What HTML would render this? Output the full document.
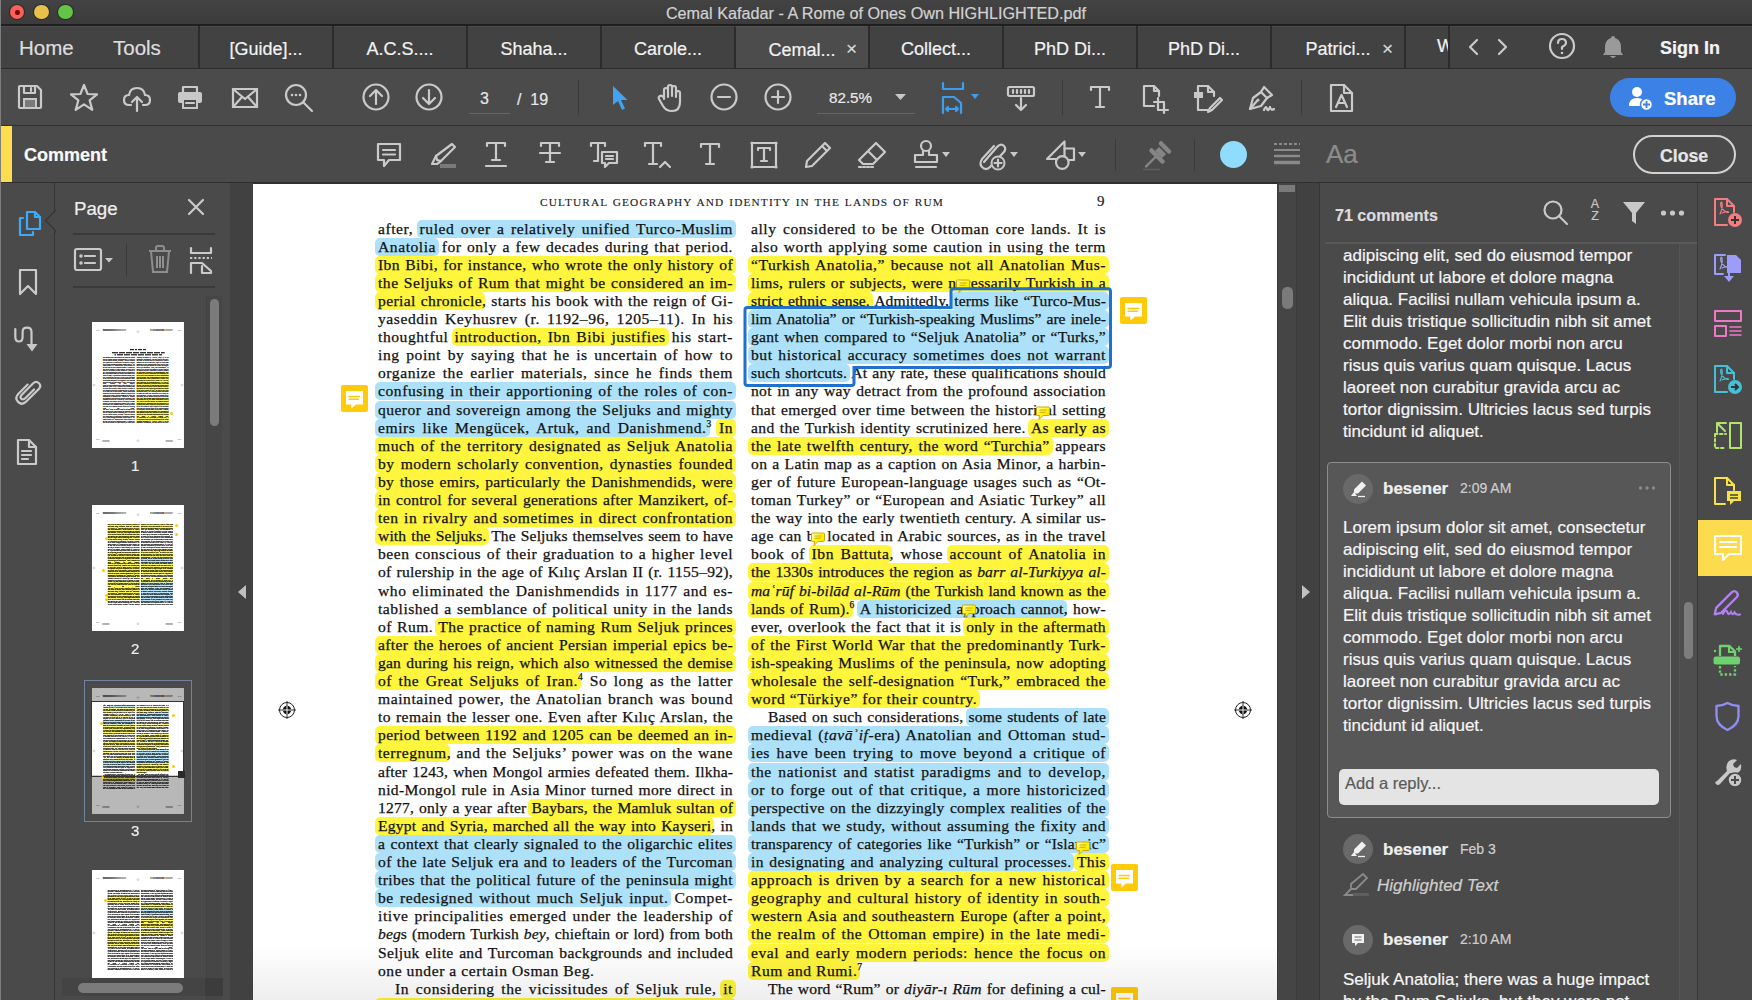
<!DOCTYPE html>
<html><head><meta charset="utf-8"><title>Acrobat</title>
<style>
*{box-sizing:border-box}
html,body{margin:0;padding:0}
body{width:1752px;height:1000px;overflow:hidden;position:relative;background:#3f3f3f;font-family:"Liberation Sans",sans-serif;color:#e8e8e8}
.a{position:absolute;-webkit-text-stroke:0.2px}
svg{position:absolute;overflow:visible}
#title{left:0;top:0;width:1752px;height:24px;background:linear-gradient(#434343,#3b3b3b)}
#title .t{left:0;width:1752px;top:4px;text-align:center;font-size:16.2px;color:#d2d2d2}
.dot{width:14.8px;height:14.8px;border-radius:50%;top:4.6px}
#tabs{left:0;top:26px;width:1752px;height:42px;background:#424242;border-top:1px solid #4d4d4d}
.tab{top:-1px;height:42px;width:134px;border-left:2px solid #2c2c2c;text-align:center;font-size:18px;line-height:46px;color:#f2f2f2}
.tab.act{background:#4c4c4c;border-top:1px solid #555}
#tool{left:0;top:69px;width:1752px;height:56px;background:#4b4b4b}
#cbar{left:0;top:126px;width:1752px;height:56px;background:#4a4a4a}
.sep{background:#2e2e2e}
.ic{stroke:#c9c9c9;fill:none;stroke-width:2}
.ln{position:absolute;height:18.1px;line-height:18.1px;white-space:nowrap;text-align:justify;text-align-last:justify;font-family:"Liberation Serif",serif;font-size:15.6px;color:#111;-webkit-text-stroke:0.25px #111}
.ln.last{text-align-last:left}
.ln y{background:#fff53d;border-radius:5px;padding:0 3px 1px;margin:0 -3px}
.ln c{background:#ace1f9;border-radius:5px;padding:0 3px 1px;margin:0 -3px}
.ln sup{font-size:9.5px;vertical-align:6px;line-height:0}
.ln i{font-style:italic}
.thumbpg .ln{-webkit-text-stroke:1.6px #111;color:#111}
.thumbpg .ln y,.thumbpg .ln c{border-radius:0}
.cm{font-size:17px;line-height:22px;color:#f6f6f6}
</style></head><body>
<div class="a" id="title"><div class="a t">Cemal Kafadar - A Rome of Ones Own HIGHLIGHTED.pdf</div></div>
<div class="a" style="left:0;top:24px;width:1752px;height:2px;background:#1f1f1f"></div>
<div class="a dot" style="left:9.6px;background:#fd605a;box-shadow:0 0 0 1px #2a2a2a"></div>
<div class="a dot" style="left:34.2px;background:#e8c14a;box-shadow:0 0 0 1px #2a2a2a"></div>
<div class="a dot" style="left:58.4px;background:#62c545;box-shadow:0 0 0 1px #2a2a2a"></div>
<div class="a" style="left:15px;top:10px;width:4.5px;height:4.5px;border-radius:50%;background:#7a0a06"></div>
<div class="a" id="tabs">
<div class="a" style="left:0;top:-1px;width:198px;height:42px;background:#434343;border-top:1px solid #4d4d4d"></div>
<div class="a" style="left:19px;top:9px;font-size:20.5px;color:#dedede">Home</div>
<div class="a" style="left:113px;top:9px;font-size:20.5px;color:#dedede">Tools</div>
<div class="a tab" style="left:198px;">[Guide]...</div>
<div class="a tab" style="left:332px;">A.C.S....</div>
<div class="a tab" style="left:466px;">Shaha...</div>
<div class="a tab" style="left:600px;">Carole...</div>
<div class="a tab act" style="left:734px;">Cemal...</div>
<div class="a" style="left:846px;top:11px;font-size:19px;color:#d8d8d8">×</div>
<div class="a tab" style="left:868px;">Collect...</div>
<div class="a tab" style="left:1002px;">PhD Di...</div>
<div class="a tab" style="left:1136px;">PhD Di...</div>
<div class="a tab" style="left:1270px;">Patrici...</div>
<div class="a" style="left:1382px;top:11px;font-size:19px;color:#d8d8d8">×</div>
<div class="a" style="left:1404px;top:-1px;width:44px;height:42px;border-left:2px solid #2c2c2c;overflow:hidden"><div class="a" style="left:31px;top:10px;font-size:18px;color:#f2f2f2">W</div></div>
<div class="a" style="left:1448px;top:-1px;width:2px;height:42px;background:#2c2c2c"></div>
</div>
<div class="a" style="left:0;top:67.5px;width:1752px;height:1.5px;background:#2a2a2a"></div>
<svg style="left:1466px;top:38px" width="16" height="18" viewBox="0 0 16 18"><path d="M11 2 L4 9 L11 16" stroke="#cacaca" fill="none" stroke-width="2.2" stroke-linecap="round" stroke-linejoin="round"/></svg>
<svg style="left:1494px;top:38px" width="16" height="18" viewBox="0 0 16 18"><path d="M5 2 L12 9 L5 16" stroke="#cacaca" fill="none" stroke-width="2.2" stroke-linecap="round" stroke-linejoin="round"/></svg>
<svg style="left:1548px;top:32px" width="28" height="28" viewBox="0 0 28 28"><circle cx="14" cy="14" r="12" stroke="#cacaca" fill="none" stroke-width="2.2" stroke-linecap="round" stroke-linejoin="round"/><path d="M10 11 Q10 7 14 7 Q18 7 18 11 Q18 13 14 15 L14 17" stroke="#cacaca" fill="none" stroke-width="2.2" stroke-linecap="round" stroke-linejoin="round"/><circle cx="14" cy="21" r="1.3" fill="#c8c8c8"/></svg>
<svg style="left:1600px;top:34px" width="26" height="26" viewBox="0 0 26 26"><path d="M13 2 a2 2 0 0 1 2 2 Q21 6 21 13 L21 18 L23 21 L3 21 L5 18 L5 13 Q5 6 11 4 a2 2 0 0 1 2 -2Z" fill="#9a9a9a"/><path d="M10 22 Q13 26 16 22Z" fill="#9a9a9a"/></svg>
<div class="a" style="left:1660px;top:38px;font-size:18px;font-weight:bold;color:#f4f4f4">Sign In</div>
<div class="a" id="tool"></div>
<div class="a" style="left:0;top:125px;width:1752px;height:1.5px;background:#2f2f2f"></div>
<svg style="left:17px;top:84px" width="26" height="26" viewBox="0 0 26 26"><path d="M2 3 Q2 2 3 2 L20 2 L24 6 L24 23 Q24 24 23 24 L3 24 Q2 24 2 23Z" stroke="#cacaca" fill="none" stroke-width="2.2" stroke-linecap="round" stroke-linejoin="round"/><path d="M7 2 L7 9 L18 9 L18 2" stroke="#cacaca" fill="none" stroke-width="2.2" stroke-linecap="round" stroke-linejoin="round"/><rect x="7" y="15" width="12" height="9" fill="#7a7a7a" stroke="#c8c8c8" stroke-width="2"/><path d="M14 4 L14 7" stroke="#cacaca" fill="none" stroke-width="2.2" stroke-linecap="round" stroke-linejoin="round"/></svg>
<svg style="left:69px;top:83px" width="30" height="29" viewBox="0 0 30 29"><path d="M15 2 L18.6 11 L28 11.3 L20.6 17.3 L23.3 26.8 L15 21.3 L6.7 26.8 L9.4 17.3 L2 11.3 L11.4 11Z" stroke="#cacaca" fill="none" stroke-width="2.2" stroke-linecap="round" stroke-linejoin="round"/></svg>
<svg style="left:122px;top:83px" width="30" height="30" viewBox="0 0 30 30"><path d="M9 22 L7 22 Q2 22 2 17 Q2 12 7 12 Q8 5 15 5 Q22 5 23 12 Q28 12 28 17 Q28 22 23 22 L21 22" stroke="#cacaca" fill="none" stroke-width="2.2" stroke-linecap="round" stroke-linejoin="round"/><path d="M15 28 L15 14 M10 19 L15 14 L20 19" stroke="#cacaca" fill="none" stroke-width="2.2" stroke-linecap="round" stroke-linejoin="round"/></svg>
<svg style="left:176px;top:84px" width="28" height="26" viewBox="0 0 28 26"><path d="M7 8 L7 3 L21 3 L21 8" stroke="#cacaca" fill="none" stroke-width="2.2" stroke-linecap="round" stroke-linejoin="round"/><rect x="2" y="8" width="24" height="11" rx="2" fill="#c8c8c8"/><rect x="7" y="15" width="14" height="9" fill="#4b4b4b" stroke="#c8c8c8" stroke-width="2"/><path d="M10 19 L18 19" stroke="#cacaca" fill="none" stroke-width="2.2" stroke-linecap="round" stroke-linejoin="round"/></svg>
<svg style="left:231px;top:87px" width="28" height="22" viewBox="0 0 28 22"><rect x="2" y="2" width="24" height="18" stroke="#cacaca" fill="none" stroke-width="2.2" stroke-linecap="round" stroke-linejoin="round"/><path d="M2 2 L14 12 L26 2 M2 20 L11 10 M26 20 L17 10" stroke="#cacaca" fill="none" stroke-width="2.2" stroke-linecap="round" stroke-linejoin="round"/></svg>
<svg style="left:284px;top:83px" width="30" height="30" viewBox="0 0 30 30"><circle cx="12" cy="12" r="10" stroke="#cacaca" fill="none" stroke-width="2.2" stroke-linecap="round" stroke-linejoin="round"/><path d="M19.5 19.5 L28 28" stroke="#cacaca" fill="none" stroke-width="2.2" stroke-linecap="round" stroke-linejoin="round" stroke-width="2.5"/><circle cx="8" cy="12" r="1.3" fill="#c8c8c8"/><circle cx="12" cy="12" r="1.3" fill="#c8c8c8"/><circle cx="16" cy="12" r="1.3" fill="#c8c8c8"/></svg>
<svg style="left:362px;top:83px" width="28" height="28" viewBox="0 0 28 28"><circle cx="14" cy="14" r="12.5" stroke="#cacaca" fill="none" stroke-width="2.2" stroke-linecap="round" stroke-linejoin="round"/><path d="M14 21 L14 7 M8 13 L14 7 L20 13" stroke="#cacaca" fill="none" stroke-width="2.2" stroke-linecap="round" stroke-linejoin="round"/></svg>
<svg style="left:415px;top:83px" width="28" height="28" viewBox="0 0 28 28"><circle cx="14" cy="14" r="12.5" stroke="#cacaca" fill="none" stroke-width="2.2" stroke-linecap="round" stroke-linejoin="round"/><path d="M14 7 L14 21 M8 15 L14 21 L20 15" stroke="#cacaca" fill="none" stroke-width="2.2" stroke-linecap="round" stroke-linejoin="round"/></svg>
<div class="a" style="left:480px;top:90px;font-size:16px;color:#e8e8e8">3</div>
<div class="a" style="left:469px;top:113px;width:41px;height:1px;background:#666"></div>
<div class="a" style="left:517px;top:91px;font-size:16px;color:#e8e8e8">/&nbsp; 19</div>
<div class="a sep" style="left:578px;top:80px;width:1px;height:35px;background:#3a3a3a"></div>
<svg style="left:610px;top:84px" width="20" height="28" viewBox="0 0 20 28"><path d="M3 2 L3 21 L8 17 L12 26 L15 24.5 L11 16 L17.5 16Z" fill="#44a2f2"/></svg>
<svg style="left:656px;top:83px" width="30" height="30" viewBox="0 0 30 30"><path d="M8 16 L8 7 Q8 5 10 5 Q12 5 12 7 L12 14 M12 12 L12 4 Q12 2 14 2 Q16 2 16 4 L16 13 M16 12 L16 5 Q16 3 18 3 Q20 3 20 5 L20 14 M20 11 Q20 8 22 8 Q24 8 24 10 L24 19 Q24 28 16 28 Q10 28 7 23 L3 16 Q2 14 4 13 Q6 12 8 15" stroke="#cacaca" fill="none" stroke-width="2.2" stroke-linecap="round" stroke-linejoin="round"/></svg>
<svg style="left:710px;top:83px" width="28" height="28" viewBox="0 0 28 28"><circle cx="14" cy="14" r="12.5" stroke="#cacaca" fill="none" stroke-width="2.2" stroke-linecap="round" stroke-linejoin="round"/><path d="M8 14 L20 14" stroke="#cacaca" fill="none" stroke-width="2.2" stroke-linecap="round" stroke-linejoin="round"/></svg>
<svg style="left:764px;top:83px" width="28" height="28" viewBox="0 0 28 28"><circle cx="14" cy="14" r="12.5" stroke="#cacaca" fill="none" stroke-width="2.2" stroke-linecap="round" stroke-linejoin="round"/><path d="M8 14 L20 14 M14 8 L14 20" stroke="#cacaca" fill="none" stroke-width="2.2" stroke-linecap="round" stroke-linejoin="round"/></svg>
<div class="a" style="left:829px;top:89px;font-size:15.2px;color:#e8e8e8">82.5%</div>
<div class="a" style="left:817px;top:113px;width:98px;height:1px;background:#666"></div>
<svg style="left:895px;top:94px" width="11" height="7" viewBox="0 0 11 7"><path d="M0 0 L11 0 L5.5 6Z" fill="#c8c8c8"/></svg>
<svg style="left:940px;top:81px" width="40" height="34" viewBox="0 0 40 34"><path d="M3 2 L3 8 L23 8 L23 2" stroke="#3d9ef0" fill="none" stroke-width="2.2" stroke-linecap="round" stroke-linejoin="round"/><path d="M3 32 L3 16 L14 16 L21 22 L21 32" stroke="#3d9ef0" fill="none" stroke-width="2.2" stroke-linecap="round" stroke-linejoin="round"/><path d="M6 28 L18 28 M8 26 L6 28 L8 30 M16 26 L18 28 L16 30" stroke="#3d9ef0" fill="none" stroke-width="2.2" stroke-linecap="round" stroke-linejoin="round" stroke-width="1.6"/><path d="M31 13 L39 13 L35 18Z" fill="#3d9ef0"/></svg>
<svg style="left:1006px;top:84px" width="30" height="28" viewBox="0 0 30 28"><rect x="2" y="3" width="26" height="9" rx="1.5" stroke="#cacaca" fill="none" stroke-width="2.2" stroke-linecap="round" stroke-linejoin="round"/><path d="M7 6 L7 9 M11 6 L11 9 M15 6 L15 9 M19 6 L19 9 M23 6 L23 9" stroke="#cacaca" fill="none" stroke-width="2.2" stroke-linecap="round" stroke-linejoin="round" stroke-width="1.5"/><path d="M15 14 L15 26 M10 21 L15 26 L20 21" stroke="#cacaca" fill="none" stroke-width="2.2" stroke-linecap="round" stroke-linejoin="round"/></svg>
<div class="a" style="left:1062px;top:80px;width:1px;height:35px;background:#3a3a3a"></div>
<svg style="left:1089px;top:85px" width="22" height="24" viewBox="0 0 22 24"><path d="M2 5 L2 2 L20 2 L20 5 M11 2 L11 22 M7 22 L15 22" stroke="#cacaca" fill="none" stroke-width="2.2" stroke-linecap="round" stroke-linejoin="round"/></svg>
<svg style="left:1140px;top:84px" width="30" height="30" viewBox="0 0 30 30"><path d="M14 22 L4 22 L4 2 L14 2 L19 7 L19 12" stroke="#cacaca" fill="none" stroke-width="2.2" stroke-linecap="round" stroke-linejoin="round"/><path d="M14 2 L14 7 L19 7" stroke="#cacaca" fill="none" stroke-width="2.2" stroke-linecap="round" stroke-linejoin="round"/><path d="M18 14 L18 26 L28 26 M14 18 L24 18 L24 29" stroke="#cacaca" fill="none" stroke-width="2.2" stroke-linecap="round" stroke-linejoin="round"/></svg>
<svg style="left:1193px;top:84px" width="30" height="30" viewBox="0 0 30 30"><path d="M5 14 L5 26 L16 26 M5 8 L5 2 L15 2 L21 8 L21 12" stroke="#cacaca" fill="none" stroke-width="2.2" stroke-linecap="round" stroke-linejoin="round"/><rect x="1" y="8" width="9" height="6" fill="#c8c8c8"/><path d="M15 2 L15 8 L21 8" stroke="#cacaca" fill="none" stroke-width="2.2" stroke-linecap="round" stroke-linejoin="round"/><path d="M27 14 L17 24 L15 28 L19 26 L29 16Z" stroke="#cacaca" fill="none" stroke-width="2.2" stroke-linecap="round" stroke-linejoin="round"/></svg>
<svg style="left:1247px;top:83px" width="30" height="30" viewBox="0 0 30 30"><path d="M3 26 L6 15 L14 9 L20 15 L14 23Z" stroke="#cacaca" fill="none" stroke-width="2.2" stroke-linecap="round" stroke-linejoin="round"/><path d="M14 9 L17 4 L25 12 L20 15" stroke="#cacaca" fill="none" stroke-width="2.2" stroke-linecap="round" stroke-linejoin="round"/><path d="M3 26 L10 18" stroke="#cacaca" fill="none" stroke-width="2.2" stroke-linecap="round" stroke-linejoin="round"/><circle cx="11" cy="17" r="1.5" fill="#c8c8c8"/><path d="M17 27 Q19 22 20 26 Q21 29 23 24 Q24 28 27 26" stroke="#cacaca" fill="none" stroke-width="2.2" stroke-linecap="round" stroke-linejoin="round" stroke-width="1.6"/></svg>
<div class="a" style="left:1301px;top:80px;width:1px;height:35px;background:#3a3a3a"></div>
<svg style="left:1329px;top:83px" width="26" height="30" viewBox="0 0 26 30"><path d="M2 2 L15 2 L23 10 L23 28 L2 28Z" stroke="#cacaca" fill="none" stroke-width="2.2" stroke-linecap="round" stroke-linejoin="round"/><path d="M15 2 L15 10 L23 10" stroke="#cacaca" fill="none" stroke-width="2.2" stroke-linecap="round" stroke-linejoin="round"/><path d="M7 24 L12.5 12 L18 24 M9 20 L16 20" stroke="#cacaca" fill="none" stroke-width="2.2" stroke-linecap="round" stroke-linejoin="round" stroke-width="1.8"/></svg>
<div class="a" style="left:1610px;top:78px;width:126px;height:39px;border-radius:20px;background:#3c82e6"></div>
<svg style="left:1628px;top:86px" width="26" height="26" viewBox="0 0 26 26"><circle cx="9" cy="6" r="5" fill="#fff"/><path d="M1 20 Q1 12 9 12 Q14 12 16 15 L16 20Z" fill="#fff"/><circle cx="18.5" cy="18.5" r="6" fill="#fff" stroke="#3c82e6" stroke-width="1.5"/><path d="M18.5 15 L18.5 22 M15 18.5 L22 18.5" stroke="#3c82e6" stroke-width="1.8"/></svg>
<div class="a" style="left:1664px;top:88px;font-size:18.5px;font-weight:bold;color:#fff">Share</div>
<div class="a" id="cbar"></div>
<div class="a" style="left:0;top:126px;width:12px;height:56px;background:#fddc4e"></div>
<div class="a" style="left:24px;top:145px;font-size:18px;font-weight:bold;color:#fafafa">Comment</div>
<div class="a" style="left:0;top:182px;width:1752px;height:2px;background:#2f2f2f"></div>
<svg style="left:375px;top:141px" width="28" height="28" viewBox="0 0 28 28"><path d="M3 3 L25 3 L25 19 L14 19 L9 25 L9 19 L3 19Z" stroke="#cacaca" fill="none" stroke-width="2.2" stroke-linecap="round" stroke-linejoin="round"/><path d="M8 9 L20 9 M8 13.5 L20 13.5" stroke="#cacaca" fill="none" stroke-width="2.2" stroke-linecap="round" stroke-linejoin="round"/></svg>
<svg style="left:427px;top:140px" width="30" height="30" viewBox="0 0 30 30"><path d="M25 4 L28 7 L14 21 L10 20 L9 16Z" stroke="#cacaca" fill="none" stroke-width="2.2" stroke-linecap="round" stroke-linejoin="round"/><path d="M9 16 L5 24 L10 24 L14 21" stroke="#cacaca" fill="none" stroke-width="2.2" stroke-linecap="round" stroke-linejoin="round"/><rect x="13" y="24" width="16" height="4" fill="#7a7a7a"/></svg>
<svg style="left:484px;top:141px" width="24" height="28" viewBox="0 0 24 28"><path d="M3 5 L3 2 L21 2 L21 5 M12 2 L12 19 M8 19 L16 19 M2 25 L22 25" stroke="#cacaca" fill="none" stroke-width="2.2" stroke-linecap="round" stroke-linejoin="round"/></svg>
<svg style="left:538px;top:141px" width="24" height="28" viewBox="0 0 24 28"><path d="M3 5 L3 2 L21 2 L21 5 M12 2 L12 21 M8 21 L16 21 M2 12 L22 12" stroke="#cacaca" fill="none" stroke-width="2.2" stroke-linecap="round" stroke-linejoin="round"/></svg>
<svg style="left:588px;top:141px" width="32" height="28" viewBox="0 0 32 28"><path d="M3 5 L3 2 L17 2 L17 5 M10 2 L10 20 M6 20 L10 20" stroke="#cacaca" fill="none" stroke-width="2.2" stroke-linecap="round" stroke-linejoin="round"/><path d="M14 11 L29 11 L29 22 L21 22 L17 26 L17 22 L14 22Z" stroke="#cacaca" fill="none" stroke-width="2.2" stroke-linecap="round" stroke-linejoin="round"/><path d="M18 15 L25 15 M18 18 L25 18" stroke="#cacaca" fill="none" stroke-width="2.2" stroke-linecap="round" stroke-linejoin="round" stroke-width="1.5"/></svg>
<svg style="left:642px;top:141px" width="32" height="30" viewBox="0 0 32 30"><path d="M3 5 L3 2 L19 2 L19 5 M11 2 L11 23 M7 23 L15 23" stroke="#cacaca" fill="none" stroke-width="2.2" stroke-linecap="round" stroke-linejoin="round"/><path d="M18 26 L23 21 L28 26" stroke="#cacaca" fill="none" stroke-width="2.2" stroke-linecap="round" stroke-linejoin="round"/></svg>
<svg style="left:699px;top:142px" width="22" height="24" viewBox="0 0 22 24"><path d="M2 5 L2 2 L20 2 L20 5 M11 2 L11 22 M7 22 L15 22" stroke="#cacaca" fill="none" stroke-width="2.2" stroke-linecap="round" stroke-linejoin="round"/></svg>
<svg style="left:749px;top:140px" width="30" height="30" viewBox="0 0 30 30"><rect x="3" y="3" width="24" height="24" stroke="#cacaca" fill="none" stroke-width="2.2" stroke-linecap="round" stroke-linejoin="round"/><circle cx="3" cy="3" r="1.6" fill="#c8c8c8"/><circle cx="27" cy="3" r="1.6" fill="#c8c8c8"/><circle cx="3" cy="27" r="1.6" fill="#c8c8c8"/><circle cx="27" cy="27" r="1.6" fill="#c8c8c8"/><path d="M9 10 L9 8 L21 8 L21 10 M15 8 L15 21 M12 21 L18 21" stroke="#cacaca" fill="none" stroke-width="2.2" stroke-linecap="round" stroke-linejoin="round" stroke-width="1.7"/></svg>
<svg style="left:803px;top:140px" width="30" height="30" viewBox="0 0 30 30"><path d="M22 3 L27 8 L9 26 L3 27 L4 21Z M19 6 L24 11" stroke="#cacaca" fill="none" stroke-width="2.2" stroke-linecap="round" stroke-linejoin="round"/></svg>
<svg style="left:856px;top:140px" width="32" height="30" viewBox="0 0 32 30"><path d="M20 3 L29 12 L17 24 L7 24 L3 20Z M12 11 L21 20" stroke="#cacaca" fill="none" stroke-width="2.2" stroke-linecap="round" stroke-linejoin="round"/><path d="M3 27 L18 27" stroke="#cacaca" fill="none" stroke-width="2.2" stroke-linecap="round" stroke-linejoin="round" stroke-dasharray="2 2"/></svg>
<svg style="left:911px;top:138px" width="40" height="34" viewBox="0 0 40 34"><circle cx="15" cy="8" r="5" stroke="#cacaca" fill="none" stroke-width="2.2" stroke-linecap="round" stroke-linejoin="round"/><path d="M12 13 L12 17 L4 17 L4 24 L26 24 L26 17 L18 17 L18 13" stroke="#cacaca" fill="none" stroke-width="2.2" stroke-linecap="round" stroke-linejoin="round"/><path d="M5 29 L25 29" stroke="#cacaca" fill="none" stroke-width="2.2" stroke-linecap="round" stroke-linejoin="round"/><path d="M31 14 L39 14 L35 19Z" fill="#c8c8c8"/></svg>
<svg style="left:977px;top:138px" width="42" height="34" viewBox="0 0 42 34"><path d="M7 24 L20 9 Q24 5 27 8 Q30 11 26 15 L13 29 Q9 33 5 29 Q2 26 5 21 L17 8" stroke="#cacaca" fill="none" stroke-width="2.2" stroke-linecap="round" stroke-linejoin="round"/><circle cx="21" cy="25" r="6.5" fill="#4a4a4a" stroke="#c8c8c8" stroke-width="2"/><path d="M21 21.5 L21 28.5 M17.5 25 L24.5 25" stroke="#cacaca" fill="none" stroke-width="2.2" stroke-linecap="round" stroke-linejoin="round"/><path d="M33 14 L41 14 L37 19Z" fill="#c8c8c8"/></svg>
<svg style="left:1045px;top:138px" width="42" height="34" viewBox="0 0 42 34"><path d="M2 21 L19.5 3.5 L19.5 21Z" stroke="#cacaca" fill="none" stroke-width="2.2" stroke-linecap="round" stroke-linejoin="round"/><path d="M19.5 10.5 L29 10.5 L29 22 L23 22" stroke="#cacaca" fill="none" stroke-width="2.2" stroke-linecap="round" stroke-linejoin="round"/><circle cx="17.3" cy="24.5" r="6.3" fill="#4a4a4a" stroke="#c8c8c8" stroke-width="2.2"/><path d="M33 14 L41 14 L37 19Z" fill="#c8c8c8"/></svg>
<div class="a" style="left:1115px;top:139px;width:1px;height:32px;background:#3a3a3a"></div>
<svg style="left:1142px;top:140px" width="30" height="32" viewBox="0 0 30 32"><path d="M19 3.5 L27 11.5" stroke="#858585" stroke-width="4.5" stroke-linecap="round"/><path d="M17 7 L24 14 L20 18 L13 11Z" fill="#858585"/><path d="M9.5 10.5 L20.5 21.5" stroke="#858585" stroke-width="4.5" stroke-linecap="round"/><path d="M14 16.5 L4 26.5" stroke="#858585" stroke-width="2.4" stroke-linecap="round"/><path d="M1 29.5 L18 29.5" stroke="#5e5e5e" stroke-width="1.6"/></svg>
<div class="a" style="left:1194px;top:139px;width:1px;height:32px;background:#3a3a3a"></div>
<div class="a" style="left:1220px;top:141px;width:27px;height:27px;border-radius:50%;background:#8fdcfc"></div>
<svg style="left:1273px;top:141px" width="28" height="26" viewBox="0 0 28 26"><path d="M1 3 L27 3" stroke="#8a8a8a" stroke-width="2" stroke-dasharray="3 2"/><path d="M1 9 L27 9" stroke="#8a8a8a" stroke-width="2"/><path d="M1 15 L27 15" stroke="#8a8a8a" stroke-width="2.5"/><path d="M1 21.5 L27 21.5" stroke="#8a8a8a" stroke-width="3.5"/></svg>
<div class="a" style="left:1326px;top:139px;font-size:26px;color:#8c8c8c">Aa</div>
<div class="a" style="left:1633px;top:135px;width:103px;height:39px;border-radius:20px;border:2px solid #d2d2d2"></div>
<div class="a" style="left:1660px;top:146px;font-size:17.7px;font-weight:bold;color:#e6e6e6">Close</div>
<div class="a" style="left:0;top:183px;width:54px;height:817px;background:#4a4a4a"></div>
<div class="a" style="left:55px;top:183px;width:175px;height:817px;background:#4a4a4a"></div>
<div class="a" style="left:230px;top:183px;width:23px;height:817px;background:#414141"></div>
<div class="a" style="left:54px;top:183px;width:1px;height:817px;background:#353535"></div>
<div class="a" style="left:0;top:0;width:1px;height:1000px;background:#7d7d7d"></div>
<svg style="left:44px;top:209px" width="12" height="24" viewBox="0 0 12 24"><path d="M11 0 L11 2 L1.5 11.5 L11 21 L11 24" stroke="#353535" stroke-width="1.2" fill="#4a4a4a"/></svg>
<svg style="left:16px;top:209px" width="26" height="28" viewBox="0 0 26 28"><path d="M11 3 L19 3 L24 8 L24 20 L11 20Z" stroke="#3fa9f5" fill="none" stroke-width="2.2" stroke-linecap="round" stroke-linejoin="round"/><path d="M19 3 L19 8 L24 8" stroke="#3fa9f5" fill="none" stroke-width="2.2" stroke-linecap="round" stroke-linejoin="round"/><path d="M7 9 L4 9 L4 26 L17 26 L17 23" stroke="#3fa9f5" fill="none" stroke-width="2.2" stroke-linecap="round" stroke-linejoin="round"/></svg>
<svg style="left:17px;top:267px" width="22" height="30" viewBox="0 0 22 30"><path d="M3 3 L19 3 L19 27 L11 19 L3 27Z" stroke="#cacaca" fill="none" stroke-width="2.2" stroke-linecap="round" stroke-linejoin="round"/></svg>
<svg style="left:10px;top:324px" width="32" height="32" viewBox="0 0 32 32"><path d="M5.3 5 L5.3 13 Q5.3 17.5 9 17.5 Q12.6 17.5 12.6 13 L12.6 8 Q12.6 3.7 17 3.7 Q21.5 3.7 21.5 8 L21.5 21" stroke="#cacaca" fill="none" stroke-width="2.2" stroke-linecap="round" stroke-linejoin="round" stroke-width="2.3"/><path d="M16.5 20 L27.5 20 L22 27.5Z" fill="#c8c8c8"/></svg>
<svg style="left:12px;top:376px" width="32" height="32" viewBox="0 0 32 32"><g transform="rotate(45 16 16)"><path d="M18.5 10 L18.5 22 Q18.5 25.5 16 25.5 Q13.5 25.5 13.5 22 L13.5 6.5 Q13.5 2 17.5 2 Q21.5 2 21.5 6.5 L21.5 24 Q21.5 30 16 30 Q10.5 30 10.5 24 L10.5 11" stroke="#cacaca" fill="none" stroke-width="2.2" stroke-linecap="round" stroke-linejoin="round" stroke-width="2.2"/></g></svg>
<svg style="left:15px;top:437px" width="24" height="30" viewBox="0 0 24 30"><path d="M3 3 L14 3 L21 10 L21 27 L3 27Z" stroke="#cacaca" fill="none" stroke-width="2.2" stroke-linecap="round" stroke-linejoin="round"/><path d="M14 3 L14 10 L21 10 M7 14 L16 14 M7 18 L16 18 M7 22 L13 22" stroke="#cacaca" fill="none" stroke-width="2.2" stroke-linecap="round" stroke-linejoin="round" stroke-width="1.7"/></svg>
<div class="a" style="left:74px;top:198px;font-size:18.7px;color:#efefef">Page</div>
<svg style="left:186px;top:197px" width="20" height="20" viewBox="0 0 20 20"><path d="M3 3 L17 17 M17 3 L3 17" stroke="#cacaca" fill="none" stroke-width="2.2" stroke-linecap="round" stroke-linejoin="round" stroke-width="2.2"/></svg>
<div class="a" style="left:73px;top:233px;width:142px;height:1.5px;background:#3a3a3a"></div>
<svg style="left:73px;top:246px" width="52" height="28" viewBox="0 0 52 28"><rect x="2" y="3" width="26" height="21" rx="2" stroke="#cacaca" fill="none" stroke-width="2.2" stroke-linecap="round" stroke-linejoin="round"/><circle cx="8" cy="10" r="1.8" fill="#c8c8c8"/><circle cx="8" cy="17" r="1.8" fill="#c8c8c8"/><path d="M12 10 L22 10 M12 17 L22 17" stroke="#cacaca" fill="none" stroke-width="2.2" stroke-linecap="round" stroke-linejoin="round" stroke-width="2.4"/><path d="M32 12 L40 12 L36 16.5Z" fill="#c8c8c8"/></svg>
<div class="a" style="left:126px;top:244px;width:1px;height:32px;background:#3a3a3a"></div>
<svg style="left:146px;top:244px" width="28" height="32" viewBox="0 0 28 32"><path d="M3 7 L25 7 M10 7 L10 4 Q10 2 12 2 L16 2 Q18 2 18 4 L18 7 M5 7 L7 28 L21 28 L23 7 M11 12 L11 24 M14 12 L14 24 M17 12 L17 24" stroke="#8e8e8e" fill="none" stroke-width="2"/></svg>
<svg style="left:188px;top:246px" width="26" height="30" viewBox="0 0 26 30"><path d="M3 2 L3 7 L23 7 L23 2" stroke="#cacaca" fill="none" stroke-width="2.2" stroke-linecap="round" stroke-linejoin="round"/><path d="M2 12 L24 12" stroke="#c8c8c8" stroke-width="2" stroke-dasharray="2.2 2"/><path d="M3 27 L3 17 L14 17 L23 25 L23 27 L14 27 L14 20" stroke="#cacaca" fill="none" stroke-width="2.2" stroke-linecap="round" stroke-linejoin="round"/></svg>
<div class="a" style="left:73px;top:286px;width:142px;height:1.5px;background:#3a3a3a"></div>
<div class="a" style="left:206px;top:296px;width:16px;height:704px;background:#464646;border-left:1px solid #424242"></div>
<div class="a" style="left:210px;top:299px;width:9px;height:127px;border-radius:5px;background:#7b7b7b"></div>
<div class="a thumbpg" style="left:92px;top:322px;width:1024px;height:1403px;transform:scale(0.0898);transform-origin:0 0;background:#fff;overflow:hidden;height:1403px;box-shadow:0 1px 2px #222"><div class="a" style="left:120px;top:80px;width:260px;height:18px;background:linear-gradient(90deg,#111 0%,#333 40%,#999 70%,#ddd 100%);border:3px solid #333"></div><div class="a" style="left:650px;top:80px;width:250px;height:18px;background:linear-gradient(90deg,#d6c21c 0 12%,#1d8ab0 12% 25%,#333a8a 25% 37%,#b0204a 37% 50%,#222 50% 62%,#e0d040 62% 75%,#9cc4d8 75% 87%,#c8a8c8 87%);border:3px solid #333"></div><div class="a" style="left:45px;top:95px;width:40px;height:3px;background:#333"></div><div class="a" style="left:955px;top:95px;width:40px;height:3px;background:#333"></div><div class="a" style="left:45px;top:1310px;width:40px;height:3px;background:#333"></div><div class="a" style="left:955px;top:1310px;width:40px;height:3px;background:#333"></div><div class="a" style="left:115px;top:1320px;width:80px;height:10px;background:#555"></div><div class="a" style="left:820px;top:1320px;width:80px;height:10px;background:#555"></div><div class="a" style="left:10px;top:690px;width:24px;height:24px;border-radius:50%;border:3px solid #666"></div><div class="a" style="left:990px;top:690px;width:24px;height:24px;border-radius:50%;border:3px solid #666"></div><div class="a" style="left:500px;top:1310px;width:24px;height:24px;border-radius:50%;border:3px solid #666"></div><div class="a" style="left:500px;top:95px;width:24px;height:24px;border-radius:50%;border:3px solid #666"></div><div class="a" style="left:420px;top:300px;width:180px;height:14px;background:repeating-linear-gradient(90deg,#222 0 14px,#fff 14px 18px)"></div><div class="a" style="left:220px;top:335px;width:590px;height:14px;background:repeating-linear-gradient(90deg,#222 0 20px,#fff 20px 26px)"></div><div class="a" style="left:250px;top:358px;width:530px;height:14px;background:repeating-linear-gradient(90deg,#222 0 20px,#fff 20px 26px)"></div><div class="ln" style="top:389.0px;left:122px;width:355px;letter-spacing:0.32px">that emerged over time between the historical setting</div>
<div class="ln" style="top:407.1px;left:122px;width:355px;letter-spacing:0.35px">and the Turkish identity scrutinized here. As early as</div>
<div class="ln" style="top:425.2px;left:122px;width:355px;letter-spacing:0.46px">the late twelfth century, the word “Turchia” appears</div>
<div class="ln" style="top:443.3px;left:122px;width:355px;letter-spacing:0.35px">on a Latin map as a caption on Asia Minor, a harbin-</div>
<div class="ln" style="top:461.4px;left:122px;width:355px;letter-spacing:0.34px">ger of future European-language usages such as “Ot-</div>
<div class="ln" style="top:479.5px;left:122px;width:355px;letter-spacing:0.35px">toman Turkey” or “European and Asiatic Turkey” all</div>
<div class="ln" style="top:497.6px;left:122px;width:355px;letter-spacing:0.23px">the way into the early twentieth century. A similar us-</div>
<div class="ln" style="top:515.7px;left:122px;width:355px;letter-spacing:0.39px">age can be located in Arabic sources, as in the travel</div>
<div class="ln" style="top:533.8px;left:122px;width:355px;letter-spacing:0.55px">book of Ibn Battuta, whose account of Anatolia in</div>
<div class="ln" style="top:551.9px;left:122px;width:355px;letter-spacing:0.10px">the 1330s introduces the region as <i>barr al-Turkiyya al-</i></div>
<div class="ln" style="top:570.0px;left:122px;width:355px;letter-spacing:0.09px"><i>maʿrūf bi-bilād al-Rūm</i> (the Turkish land known as the</div>
<div class="ln" style="top:588.1px;left:122px;width:355px;letter-spacing:0.24px">lands of Rum).<sup>6</sup> A historicized approach cannot, how-</div>
<div class="ln" style="top:606.2px;left:122px;width:355px;letter-spacing:0.34px">ever, overlook the fact that it is only in the aftermath</div>
<div class="ln" style="top:624.3px;left:122px;width:355px;letter-spacing:0.46px">of the First World War that the predominantly Turk-</div>
<div class="ln" style="top:642.4px;left:122px;width:355px;letter-spacing:0.25px">ish-speaking Muslims of the peninsula, now adopting</div>
<div class="ln" style="top:660.5px;left:122px;width:355px;letter-spacing:0.38px">wholesale the self-designation “Turk,” embraced the</div>
<div class="ln" style="top:678.6px;left:122px;width:355px;letter-spacing:0.55px">word “Türkiye” for their country.</div>
<div class="ln" style="top:696.7px;left:122px;width:355px;letter-spacing:0.47px">Based on such considerations, some students of late</div>
<div class="ln" style="top:714.8px;left:122px;width:355px;letter-spacing:0.52px">medieval (<i>ṭavāʾif</i>-era) Anatolian and Ottoman stud-</div>
<div class="ln" style="top:732.9px;left:122px;width:355px;letter-spacing:0.55px">ies have been trying to move beyond a critique of</div>
<div class="ln" style="top:751.0px;left:122px;width:355px;letter-spacing:0.55px">the nationist and statist paradigms and to develop,</div>
<div class="ln" style="top:769.1px;left:122px;width:355px;letter-spacing:0.55px">or to forge out of that critique, a more historicized</div>
<div class="ln" style="top:787.2px;left:122px;width:355px;letter-spacing:0.24px">perspective on the dizzyingly complex realities of the</div>
<div class="ln" style="top:805.3px;left:122px;width:355px;letter-spacing:0.43px">lands that we study, without assuming the fixity and</div>
<div class="ln" style="top:823.4px;left:122px;width:355px;letter-spacing:0.18px">transparency of categories like “Turkish” or “Islamic”</div>
<div class="ln" style="top:841.5px;left:122px;width:355px;letter-spacing:0.33px">in designating and analyzing cultural processes. This</div>
<div class="ln" style="top:859.6px;left:122px;width:355px;letter-spacing:0.55px">approach is driven by a search for a new historical</div>
<div class="ln" style="top:877.7px;left:122px;width:355px;letter-spacing:0.55px">geography and cultural history of identity in south-</div>
<div class="ln" style="top:895.8px;left:122px;width:355px;letter-spacing:0.41px">western Asia and southeastern Europe (after a point,</div>
<div class="ln" style="top:913.9px;left:122px;width:355px;letter-spacing:0.55px">the realm of the Ottoman empire) in the late medi-</div>
<div class="ln" style="top:932.0px;left:122px;width:355px;letter-spacing:0.55px">eval and early modern periods: hence the focus on</div>
<div class="ln" style="top:950.1px;left:122px;width:355px;letter-spacing:0.55px">Rum and Rumi.<sup>7</sup></div>
<div class="ln" style="top:968.2px;left:122px;width:355px;letter-spacing:0.54px">The word “Rum” or <i>diyār-ı Rūm</i> for defining a cul-</div>
<div class="ln" style="top:986.3px;left:122px;width:355px;letter-spacing:0.32px">that emerged over time between the historical setting</div>
<div class="ln" style="top:1004.4px;left:122px;width:355px;letter-spacing:0.35px">and the Turkish identity scrutinized here. As early as</div>
<div class="ln" style="top:1022.5px;left:122px;width:355px;letter-spacing:0.46px">the late twelfth century, the word “Turchia” appears</div>
<div class="ln" style="top:1040.6px;left:122px;width:355px;letter-spacing:0.35px">on a Latin map as a caption on Asia Minor, a harbin-</div>
<div class="ln" style="top:1058.7px;left:122px;width:355px;letter-spacing:0.34px">ger of future European-language usages such as “Ot-</div>
<div class="ln" style="top:1076.8px;left:122px;width:355px;letter-spacing:0.35px">toman Turkey” or “European and Asiatic Turkey” all</div>
<div class="ln" style="top:1094.9px;left:122px;width:355px;letter-spacing:0.23px">the way into the early twentieth century. A similar us-</div>
<div class="ln" style="top:1113.0px;left:122px;width:355px;letter-spacing:0.39px">age can be located in Arabic sources, as in the travel</div><div class="ln" style="top:389.0px;left:497px;width:355px;letter-spacing:0.55px">yaseddin Keyhusrev (r. 1192–96, 1205–11). In his</div>
<div class="ln" style="top:407.1px;left:497px;width:355px;letter-spacing:0.55px">thoughtful introduction, Ibn Bibi justifies his start-</div>
<div class="ln" style="top:425.2px;left:497px;width:355px;letter-spacing:0.55px">ing point by saying that he is uncertain of how to</div>
<div class="ln" style="top:443.3px;left:497px;width:355px;letter-spacing:0.55px">organize the earlier materials, since he finds them</div>
<div class="ln" style="top:461.4px;left:497px;width:355px;letter-spacing:0.55px">confusing in their apportioning of the roles of con-</div>
<div class="ln" style="top:479.5px;left:497px;width:355px;letter-spacing:0.44px">queror and sovereign among the Seljuks and mighty</div>
<div class="ln" style="top:497.6px;left:497px;width:355px;letter-spacing:0.55px">emirs like Mengücek, Artuk, and Danishmend.<sup>3</sup> In</div>
<div class="ln" style="top:515.7px;left:497px;width:355px;letter-spacing:0.55px">much of the territory designated as Seljuk Anatolia</div>
<div class="ln" style="top:533.8px;left:497px;width:355px;letter-spacing:0.50px">by modern scholarly convention, dynasties founded</div>
<div class="ln" style="top:551.9px;left:497px;width:355px;letter-spacing:0.27px"><y>by those emirs, particularly the Danishmendids, were</y></div>
<div class="ln" style="top:570.0px;left:497px;width:355px;letter-spacing:0.26px"><y>in control for several generations after Manzikert, of-</y></div>
<div class="ln" style="top:588.1px;left:497px;width:355px;letter-spacing:0.50px"><y>ten in rivalry and sometimes in direct confrontation</y></div>
<div class="ln" style="top:606.2px;left:497px;width:355px;letter-spacing:0.12px"><y>with the Seljuks. The Seljuks themselves seem to have</y></div>
<div class="ln" style="top:624.3px;left:497px;width:355px;letter-spacing:0.52px"><y>been conscious of their graduation to a higher level</y></div>
<div class="ln" style="top:642.4px;left:497px;width:355px;letter-spacing:0.27px"><y>of rulership in the age of Kılıç Arslan II (r. 1155–92),</y></div>
<div class="ln" style="top:660.5px;left:497px;width:355px;letter-spacing:0.55px"><y>who eliminated the Danishmendids in 1177 and es-</y></div>
<div class="ln" style="top:678.6px;left:497px;width:355px;letter-spacing:0.50px"><y>tablished a semblance of political unity in the lands</y></div>
<div class="ln" style="top:696.7px;left:497px;width:355px;letter-spacing:0.41px"><y>of Rum. The practice of naming Rum Seljuk princes</y></div>
<div class="ln" style="top:714.8px;left:497px;width:355px;letter-spacing:0.36px"><y>after the heroes of ancient Persian imperial epics be-</y></div>
<div class="ln" style="top:732.9px;left:497px;width:355px;letter-spacing:0.20px"><y>gan during his reign, which also witnessed the demise</y></div>
<div class="ln" style="top:751.0px;left:497px;width:355px;letter-spacing:0.55px"><y>of the Great Seljuks of Iran.<sup>4</sup> So long as the latter</y></div>
<div class="ln" style="top:769.1px;left:497px;width:355px;letter-spacing:0.55px">maintained power, the Anatolian branch was bound</div>
<div class="ln" style="top:787.2px;left:497px;width:355px;letter-spacing:0.37px">to remain the lesser one. Even after Kılıç Arslan, the</div>
<div class="ln" style="top:805.3px;left:497px;width:355px;letter-spacing:0.38px">period between 1192 and 1205 can be deemed an in-</div>
<div class="ln" style="top:823.4px;left:497px;width:355px;letter-spacing:0.52px">terregnum, and the Seljuks’ power was on the wane</div>
<div class="ln" style="top:841.5px;left:497px;width:355px;letter-spacing:0.12px"><y>after 1243, when Mongol armies defeated them. Ilkha-</y></div>
<div class="ln" style="top:859.6px;left:497px;width:355px;letter-spacing:0.36px"><y>nid-Mongol rule in Asia Minor turned more direct in</y></div>
<div class="ln" style="top:877.7px;left:497px;width:355px;letter-spacing:0.18px"><y>1277, only a year after Baybars, the Mamluk sultan of</y></div>
<div class="ln" style="top:895.8px;left:497px;width:355px;letter-spacing:0.23px"><y>Egypt and Syria, marched all the way into Kayseri, in</y></div>
<div class="ln" style="top:913.9px;left:497px;width:355px;letter-spacing:0.33px"><y>a context that clearly signaled to the oligarchic elites</y></div>
<div class="ln" style="top:932.0px;left:497px;width:355px;letter-spacing:0.38px">of the late Seljuk era and to leaders of the Turcoman</div>
<div class="ln" style="top:950.1px;left:497px;width:355px;letter-spacing:0.40px">tribes that the political future of the peninsula might</div>
<div class="ln" style="top:968.2px;left:497px;width:355px;letter-spacing:0.55px">be redesigned without much Seljuk input. Compet-</div>
<div class="ln" style="top:986.3px;left:497px;width:355px;letter-spacing:0.55px"><y>itive principalities emerged under the leadership of</y></div>
<div class="ln" style="top:1004.4px;left:497px;width:355px;letter-spacing:0.10px"><y><i>beg</i>s (modern Turkish <i>bey</i>, chieftain or lord) from both</y></div>
<div class="ln" style="top:1022.5px;left:497px;width:355px;letter-spacing:0.30px"><y>Seljuk elite and Turcoman backgrounds and included</y></div>
<div class="ln" style="top:1040.6px;left:497px;width:355px;letter-spacing:0.55px"><y>one under a certain Osman Beg.</y></div>
<div class="ln" style="top:1058.7px;left:497px;width:355px;letter-spacing:0.55px"><y>In considering the vicissitudes of Seljuk rule, it</y></div>
<div class="ln" style="top:1076.8px;left:497px;width:355px;letter-spacing:0.43px"><y>is important to note that the heartlands of the Seljuk</y></div>
<div class="ln" style="top:1094.9px;left:497px;width:355px;letter-spacing:0.55px"><y>yaseddin Keyhusrev (r. 1192–96, 1205–11). In his</y></div>
<div class="ln" style="top:1113.0px;left:497px;width:355px;letter-spacing:0.55px">thoughtful introduction, Ibn Bibi justifies his start-</div></div>
<div class="a" style="left:170px;top:412px;width:3px;height:3px;border-radius:50%;background:#fdc713"></div>
<div class="a" style="left:131px;top:457px;font-size:15px;color:#f0f0f0">1</div>
<div class="a thumbpg" style="left:92px;top:505px;width:1024px;height:1403px;transform:scale(0.0898);transform-origin:0 0;background:#fff;overflow:hidden;box-shadow:0 1px 2px #222"><div class="a" style="left:120px;top:80px;width:260px;height:18px;background:linear-gradient(90deg,#111 0%,#333 40%,#999 70%,#ddd 100%);border:3px solid #333"></div><div class="a" style="left:650px;top:80px;width:250px;height:18px;background:linear-gradient(90deg,#d6c21c 0 12%,#1d8ab0 12% 25%,#333a8a 25% 37%,#b0204a 37% 50%,#222 50% 62%,#e0d040 62% 75%,#9cc4d8 75% 87%,#c8a8c8 87%);border:3px solid #333"></div><div class="a" style="left:45px;top:95px;width:40px;height:3px;background:#333"></div><div class="a" style="left:955px;top:95px;width:40px;height:3px;background:#333"></div><div class="a" style="left:45px;top:1310px;width:40px;height:3px;background:#333"></div><div class="a" style="left:955px;top:1310px;width:40px;height:3px;background:#333"></div><div class="a" style="left:115px;top:1320px;width:80px;height:10px;background:#555"></div><div class="a" style="left:820px;top:1320px;width:80px;height:10px;background:#555"></div><div class="a" style="left:10px;top:690px;width:24px;height:24px;border-radius:50%;border:3px solid #666"></div><div class="a" style="left:990px;top:690px;width:24px;height:24px;border-radius:50%;border:3px solid #666"></div><div class="a" style="left:500px;top:1310px;width:24px;height:24px;border-radius:50%;border:3px solid #666"></div><div class="a" style="left:500px;top:95px;width:24px;height:24px;border-radius:50%;border:3px solid #666"></div><div class="ln" style="top:212.0px;left:175px;width:355px;letter-spacing:0.29px"><y>lims, rulers or subjects, were necessarily Turkish in a</y></div>
<div class="ln" style="top:230.1px;left:175px;width:355px;letter-spacing:0.07px"><y>strict ethnic sense. Admittedly, terms like “Turco-Mus-</y></div>
<div class="ln" style="top:248.2px;left:175px;width:355px;letter-spacing:-0.03px"><y>lim Anatolia” or “Turkish-speaking Muslims” are inele-</y></div>
<div class="ln" style="top:266.3px;left:175px;width:355px;letter-spacing:0.24px"><y>gant when compared to “Seljuk Anatolia” or “Turks,”</y></div>
<div class="ln" style="top:284.4px;left:175px;width:355px;letter-spacing:0.55px"><y>but historical accuracy sometimes does not warrant</y></div>
<div class="ln" style="top:302.5px;left:175px;width:355px;letter-spacing:0.14px"><y>such shortcuts. At any rate, these qualifications should</y></div>
<div class="ln" style="top:320.6px;left:175px;width:355px;letter-spacing:0.32px"><y>not in any way detract from the profound association</y></div>
<div class="ln" style="top:338.7px;left:175px;width:355px;letter-spacing:0.32px"><y>that emerged over time between the historical setting</y></div>
<div class="ln" style="top:356.8px;left:175px;width:355px;letter-spacing:0.35px"><y>and the Turkish identity scrutinized here. As early as</y></div>
<div class="ln" style="top:374.9px;left:175px;width:355px;letter-spacing:0.46px"><y>the late twelfth century, the word “Turchia” appears</y></div>
<div class="ln" style="top:393.0px;left:175px;width:355px;letter-spacing:0.35px">on a Latin map as a caption on Asia Minor, a harbin-</div>
<div class="ln" style="top:411.1px;left:175px;width:355px;letter-spacing:0.34px">ger of future European-language usages such as “Ot-</div>
<div class="ln" style="top:429.2px;left:175px;width:355px;letter-spacing:0.35px">toman Turkey” or “European and Asiatic Turkey” all</div>
<div class="ln" style="top:447.3px;left:175px;width:355px;letter-spacing:0.23px">the way into the early twentieth century. A similar us-</div>
<div class="ln" style="top:465.4px;left:175px;width:355px;letter-spacing:0.39px">age can be located in Arabic sources, as in the travel</div>
<div class="ln" style="top:483.5px;left:175px;width:355px;letter-spacing:0.55px">book of Ibn Battuta, whose account of Anatolia in</div>
<div class="ln" style="top:501.6px;left:175px;width:355px;letter-spacing:0.10px">the 1330s introduces the region as <i>barr al-Turkiyya al-</i></div>
<div class="ln" style="top:519.7px;left:175px;width:355px;letter-spacing:0.09px"><y><i>maʿrūf bi-bilād al-Rūm</i> (the Turkish land known as the</y></div>
<div class="ln" style="top:537.8px;left:175px;width:355px;letter-spacing:0.24px"><y>lands of Rum).<sup>6</sup> A historicized approach cannot, how-</y></div>
<div class="ln" style="top:555.9px;left:175px;width:355px;letter-spacing:0.34px"><y>ever, overlook the fact that it is only in the aftermath</y></div>
<div class="ln" style="top:574.0px;left:175px;width:355px;letter-spacing:0.46px"><y>of the First World War that the predominantly Turk-</y></div>
<div class="ln" style="top:592.1px;left:175px;width:355px;letter-spacing:0.25px"><y>ish-speaking Muslims of the peninsula, now adopting</y></div>
<div class="ln" style="top:610.2px;left:175px;width:355px;letter-spacing:0.38px"><y>wholesale the self-designation “Turk,” embraced the</y></div>
<div class="ln" style="top:628.3px;left:175px;width:355px;letter-spacing:0.55px"><y>word “Türkiye” for their country.</y></div>
<div class="ln" style="top:646.4px;left:175px;width:355px;letter-spacing:0.47px"><y>Based on such considerations, some students of late</y></div>
<div class="ln" style="top:664.5px;left:175px;width:355px;letter-spacing:0.52px"><y>medieval (<i>ṭavāʾif</i>-era) Anatolian and Ottoman stud-</y></div>
<div class="ln" style="top:682.6px;left:175px;width:355px;letter-spacing:0.55px"><y>ies have been trying to move beyond a critique of</y></div>
<div class="ln" style="top:700.7px;left:175px;width:355px;letter-spacing:0.55px"><y>the nationist and statist paradigms and to develop,</y></div>
<div class="ln" style="top:718.8px;left:175px;width:355px;letter-spacing:0.55px"><y>or to forge out of that critique, a more historicized</y></div>
<div class="ln" style="top:736.9px;left:175px;width:355px;letter-spacing:0.24px"><y>perspective on the dizzyingly complex realities of the</y></div>
<div class="ln" style="top:755.0px;left:175px;width:355px;letter-spacing:0.43px"><y>lands that we study, without assuming the fixity and</y></div>
<div class="ln" style="top:773.1px;left:175px;width:355px;letter-spacing:0.18px"><y>transparency of categories like “Turkish” or “Islamic”</y></div>
<div class="ln" style="top:791.2px;left:175px;width:355px;letter-spacing:0.33px"><y>in designating and analyzing cultural processes. This</y></div>
<div class="ln" style="top:809.3px;left:175px;width:355px;letter-spacing:0.55px">approach is driven by a search for a new historical</div>
<div class="ln" style="top:827.4px;left:175px;width:355px;letter-spacing:0.55px">geography and cultural history of identity in south-</div>
<div class="ln" style="top:845.5px;left:175px;width:355px;letter-spacing:0.41px"><y>western Asia and southeastern Europe (after a point,</y></div>
<div class="ln" style="top:863.6px;left:175px;width:355px;letter-spacing:0.55px"><y>the realm of the Ottoman empire) in the late medi-</y></div>
<div class="ln" style="top:881.7px;left:175px;width:355px;letter-spacing:0.55px"><y>eval and early modern periods: hence the focus on</y></div>
<div class="ln" style="top:899.8px;left:175px;width:355px;letter-spacing:0.55px"><y>Rum and Rumi.<sup>7</sup></y></div>
<div class="ln" style="top:917.9px;left:175px;width:355px;letter-spacing:0.54px"><y>The word “Rum” or <i>diyār-ı Rūm</i> for defining a cul-</y></div>
<div class="ln" style="top:936.0px;left:175px;width:355px;letter-spacing:0.29px"><y>lims, rulers or subjects, were necessarily Turkish in a</y></div>
<div class="ln" style="top:954.1px;left:175px;width:355px;letter-spacing:0.07px"><y>strict ethnic sense. Admittedly, terms like “Turco-Mus-</y></div>
<div class="ln" style="top:972.2px;left:175px;width:355px;letter-spacing:-0.03px"><y>lim Anatolia” or “Turkish-speaking Muslims” are inele-</y></div>
<div class="ln" style="top:990.3px;left:175px;width:355px;letter-spacing:0.24px"><y>gant when compared to “Seljuk Anatolia” or “Turks,”</y></div>
<div class="ln" style="top:1008.4px;left:175px;width:355px;letter-spacing:0.55px"><y>but historical accuracy sometimes does not warrant</y></div>
<div class="ln" style="top:1026.5px;left:175px;width:355px;letter-spacing:0.14px"><y>such shortcuts. At any rate, these qualifications should</y></div>
<div class="ln" style="top:1044.6px;left:175px;width:355px;letter-spacing:0.32px">not in any way detract from the profound association</div>
<div class="ln" style="top:1062.7px;left:175px;width:355px;letter-spacing:0.32px">that emerged over time between the historical setting</div>
<div class="ln" style="top:1080.8px;left:175px;width:355px;letter-spacing:0.35px">and the Turkish identity scrutinized here. As early as</div>
<div class="ln" style="top:1098.9px;left:175px;width:355px;letter-spacing:0.46px">the late twelfth century, the word “Turchia” appears</div><div class="ln" style="top:212.0px;left:545px;width:355px;letter-spacing:0.55px"><y>organize the earlier materials, since he finds them</y></div>
<div class="ln" style="top:230.1px;left:545px;width:355px;letter-spacing:0.55px"><y>confusing in their apportioning of the roles of con-</y></div>
<div class="ln" style="top:248.2px;left:545px;width:355px;letter-spacing:0.44px"><y>queror and sovereign among the Seljuks and mighty</y></div>
<div class="ln" style="top:266.3px;left:545px;width:355px;letter-spacing:0.55px">emirs like Mengücek, Artuk, and Danishmend.<sup>3</sup> In</div>
<div class="ln" style="top:284.4px;left:545px;width:355px;letter-spacing:0.55px">much of the territory designated as Seljuk Anatolia</div>
<div class="ln" style="top:302.5px;left:545px;width:355px;letter-spacing:0.50px">by modern scholarly convention, dynasties founded</div>
<div class="ln" style="top:320.6px;left:545px;width:355px;letter-spacing:0.27px">by those emirs, particularly the Danishmendids, were</div>
<div class="ln" style="top:338.7px;left:545px;width:355px;letter-spacing:0.26px">in control for several generations after Manzikert, of-</div>
<div class="ln" style="top:356.8px;left:545px;width:355px;letter-spacing:0.50px">ten in rivalry and sometimes in direct confrontation</div>
<div class="ln" style="top:374.9px;left:545px;width:355px;letter-spacing:0.12px">with the Seljuks. The Seljuks themselves seem to have</div>
<div class="ln" style="top:393.0px;left:545px;width:355px;letter-spacing:0.52px">been conscious of their graduation to a higher level</div>
<div class="ln" style="top:411.1px;left:545px;width:355px;letter-spacing:0.27px">of rulership in the age of Kılıç Arslan II (r. 1155–92),</div>
<div class="ln" style="top:429.2px;left:545px;width:355px;letter-spacing:0.55px">who eliminated the Danishmendids in 1177 and es-</div>
<div class="ln" style="top:447.3px;left:545px;width:355px;letter-spacing:0.50px">tablished a semblance of political unity in the lands</div>
<div class="ln" style="top:465.4px;left:545px;width:355px;letter-spacing:0.41px">of Rum. The practice of naming Rum Seljuk princes</div>
<div class="ln" style="top:483.5px;left:545px;width:355px;letter-spacing:0.36px">after the heroes of ancient Persian imperial epics be-</div>
<div class="ln" style="top:501.6px;left:545px;width:355px;letter-spacing:0.20px"><y>gan during his reign, which also witnessed the demise</y></div>
<div class="ln" style="top:519.7px;left:545px;width:355px;letter-spacing:0.55px"><y>of the Great Seljuks of Iran.<sup>4</sup> So long as the latter</y></div>
<div class="ln" style="top:537.8px;left:545px;width:355px;letter-spacing:0.55px"><y>maintained power, the Anatolian branch was bound</y></div>
<div class="ln" style="top:555.9px;left:545px;width:355px;letter-spacing:0.37px"><y>to remain the lesser one. Even after Kılıç Arslan, the</y></div>
<div class="ln" style="top:574.0px;left:545px;width:355px;letter-spacing:0.38px"><y>period between 1192 and 1205 can be deemed an in-</y></div>
<div class="ln" style="top:592.1px;left:545px;width:355px;letter-spacing:0.52px"><c>terregnum, and the Seljuks’ power was on the wane</c></div>
<div class="ln" style="top:610.2px;left:545px;width:355px;letter-spacing:0.12px"><c>after 1243, when Mongol armies defeated them. Ilkha-</c></div>
<div class="ln" style="top:628.3px;left:545px;width:355px;letter-spacing:0.36px"><c>nid-Mongol rule in Asia Minor turned more direct in</c></div>
<div class="ln" style="top:646.4px;left:545px;width:355px;letter-spacing:0.18px"><y>1277, only a year after Baybars, the Mamluk sultan of</y></div>
<div class="ln" style="top:664.5px;left:545px;width:355px;letter-spacing:0.23px"><y>Egypt and Syria, marched all the way into Kayseri, in</y></div>
<div class="ln" style="top:682.6px;left:545px;width:355px;letter-spacing:0.33px"><y>a context that clearly signaled to the oligarchic elites</y></div>
<div class="ln" style="top:700.7px;left:545px;width:355px;letter-spacing:0.38px"><y>of the late Seljuk era and to leaders of the Turcoman</y></div>
<div class="ln" style="top:718.8px;left:545px;width:355px;letter-spacing:0.40px"><y>tribes that the political future of the peninsula might</y></div>
<div class="ln" style="top:736.9px;left:545px;width:355px;letter-spacing:0.55px"><y>be redesigned without much Seljuk input. Compet-</y></div>
<div class="ln" style="top:755.0px;left:545px;width:355px;letter-spacing:0.55px"><y>itive principalities emerged under the leadership of</y></div>
<div class="ln" style="top:773.1px;left:545px;width:355px;letter-spacing:0.10px"><i>beg</i>s (modern Turkish <i>bey</i>, chieftain or lord) from both</div>
<div class="ln" style="top:791.2px;left:545px;width:355px;letter-spacing:0.30px">Seljuk elite and Turcoman backgrounds and included</div>
<div class="ln" style="top:809.3px;left:545px;width:355px;letter-spacing:0.55px"><y>one under a certain Osman Beg.</y></div>
<div class="ln" style="top:827.4px;left:545px;width:355px;letter-spacing:0.55px"><y>In considering the vicissitudes of Seljuk rule, it</y></div>
<div class="ln" style="top:845.5px;left:545px;width:355px;letter-spacing:0.43px"><y>is important to note that the heartlands of the Seljuk</y></div>
<div class="ln" style="top:863.6px;left:545px;width:355px;letter-spacing:0.55px"><c>organize the earlier materials, since he finds them</c></div>
<div class="ln" style="top:881.7px;left:545px;width:355px;letter-spacing:0.55px"><c>confusing in their apportioning of the roles of con-</c></div>
<div class="ln" style="top:899.8px;left:545px;width:355px;letter-spacing:0.44px"><c>queror and sovereign among the Seljuks and mighty</c></div>
<div class="ln" style="top:917.9px;left:545px;width:355px;letter-spacing:0.55px"><c>emirs like Mengücek, Artuk, and Danishmend.<sup>3</sup> In</c></div>
<div class="ln" style="top:936.0px;left:545px;width:355px;letter-spacing:0.55px"><c>much of the territory designated as Seljuk Anatolia</c></div>
<div class="ln" style="top:954.1px;left:545px;width:355px;letter-spacing:0.50px"><c>by modern scholarly convention, dynasties founded</c></div>
<div class="ln" style="top:972.2px;left:545px;width:355px;letter-spacing:0.27px"><c>by those emirs, particularly the Danishmendids, were</c></div>
<div class="ln" style="top:990.3px;left:545px;width:355px;letter-spacing:0.26px"><c>in control for several generations after Manzikert, of-</c></div>
<div class="ln" style="top:1008.4px;left:545px;width:355px;letter-spacing:0.50px"><c>ten in rivalry and sometimes in direct confrontation</c></div>
<div class="ln" style="top:1026.5px;left:545px;width:355px;letter-spacing:0.12px"><c>with the Seljuks. The Seljuks themselves seem to have</c></div>
<div class="ln" style="top:1044.6px;left:545px;width:355px;letter-spacing:0.52px"><c>been conscious of their graduation to a higher level</c></div>
<div class="ln" style="top:1062.7px;left:545px;width:355px;letter-spacing:0.27px"><c>of rulership in the age of Kılıç Arslan II (r. 1155–92),</c></div>
<div class="ln" style="top:1080.8px;left:545px;width:355px;letter-spacing:0.55px">who eliminated the Danishmendids in 1177 and es-</div>
<div class="ln" style="top:1098.9px;left:545px;width:355px;letter-spacing:0.50px">tablished a semblance of political unity in the lands</div></div>
<div class="a" style="left:105px;top:537px;width:3px;height:3px;border-radius:50%;background:#fdc713"></div><div class="a" style="left:102px;top:569px;width:3px;height:3px;border-radius:50%;background:#fdc713"></div><div class="a" style="left:105px;top:594px;width:3px;height:3px;border-radius:50%;background:#fdc713"></div><div class="a" style="left:105px;top:598px;width:3px;height:3px;border-radius:50%;background:#fdc713"></div><div class="a" style="left:175px;top:524px;width:3px;height:3px;border-radius:50%;background:#fdc713"></div><div class="a" style="left:175px;top:533px;width:3px;height:3px;border-radius:50%;background:#fdc713"></div>
<div class="a" style="left:131px;top:640px;font-size:15px;color:#f0f0f0">2</div>
<div class="a" style="left:84px;top:680px;width:108px;height:142px;border:1px solid #6f829e"></div>
<div class="a thumbpg" style="left:92px;top:688px;width:1024px;height:1403px;transform:scale(0.0898);transform-origin:0 0;background:#fff;overflow:hidden;box-shadow:0 1px 2px #222"><div class="a" style="left:120px;top:80px;width:260px;height:18px;background:linear-gradient(90deg,#111 0%,#333 40%,#999 70%,#ddd 100%);border:3px solid #333"></div><div class="a" style="left:650px;top:80px;width:250px;height:18px;background:linear-gradient(90deg,#d6c21c 0 12%,#1d8ab0 12% 25%,#333a8a 25% 37%,#b0204a 37% 50%,#222 50% 62%,#e0d040 62% 75%,#9cc4d8 75% 87%,#c8a8c8 87%);border:3px solid #333"></div><div class="a" style="left:45px;top:95px;width:40px;height:3px;background:#333"></div><div class="a" style="left:955px;top:95px;width:40px;height:3px;background:#333"></div><div class="a" style="left:45px;top:1310px;width:40px;height:3px;background:#333"></div><div class="a" style="left:955px;top:1310px;width:40px;height:3px;background:#333"></div><div class="a" style="left:115px;top:1320px;width:80px;height:10px;background:#555"></div><div class="a" style="left:820px;top:1320px;width:80px;height:10px;background:#555"></div><div class="a" style="left:10px;top:690px;width:24px;height:24px;border-radius:50%;border:3px solid #666"></div><div class="a" style="left:990px;top:690px;width:24px;height:24px;border-radius:50%;border:3px solid #666"></div><div class="a" style="left:500px;top:1310px;width:24px;height:24px;border-radius:50%;border:3px solid #666"></div><div class="a" style="left:500px;top:95px;width:24px;height:24px;border-radius:50%;border:3px solid #666"></div><div class="ln" style="top:191.3px;left:125px;width:355px;letter-spacing:0.55px">after, <c>ruled over a relatively unified Turco-Muslim</c></div>
<div class="ln" style="top:209.4px;left:125px;width:355px;letter-spacing:0.55px"><c>Anatolia</c> for only a few decades during that period.</div>
<div class="ln" style="top:227.5px;left:125px;width:355px;letter-spacing:0.41px"><y>Ibn Bibi, for instance, who wrote the only history of</y></div>
<div class="ln" style="top:245.6px;left:125px;width:355px;letter-spacing:0.50px"><y>the Seljuks of Rum that might be considered an im-</y></div>
<div class="ln" style="top:263.7px;left:125px;width:355px;letter-spacing:0.35px"><y>perial chronicle</y>, starts his book with the reign of Gi-</div>
<div class="ln" style="top:281.8px;left:125px;width:355px;letter-spacing:0.55px">yaseddin Keyhusrev (r. 1192–96, 1205–11). In his</div>
<div class="ln" style="top:299.9px;left:125px;width:355px;letter-spacing:0.55px">thoughtful <y>introduction, Ibn Bibi justifies</y> his start-</div>
<div class="ln" style="top:318.0px;left:125px;width:355px;letter-spacing:0.55px">ing point by saying that he is uncertain of how to</div>
<div class="ln" style="top:336.1px;left:125px;width:355px;letter-spacing:0.55px">organize the earlier materials, since he finds them</div>
<div class="ln" style="top:354.2px;left:125px;width:355px;letter-spacing:0.55px"><c>confusing in their apportioning of the roles of con-</c></div>
<div class="ln" style="top:372.3px;left:125px;width:355px;letter-spacing:0.44px"><c>queror and sovereign among the Seljuks and mighty</c></div>
<div class="ln" style="top:390.4px;left:125px;width:355px;letter-spacing:0.55px"><c>emirs like Mengücek, Artuk, and Danishmend.</c><sup>3</sup> <y>In</y></div>
<div class="ln" style="top:408.5px;left:125px;width:355px;letter-spacing:0.55px"><y>much of the territory designated as Seljuk Anatolia</y></div>
<div class="ln" style="top:426.6px;left:125px;width:355px;letter-spacing:0.50px"><y>by modern scholarly convention, dynasties founded</y></div>
<div class="ln" style="top:444.7px;left:125px;width:355px;letter-spacing:0.27px"><y>by those emirs, particularly the Danishmendids, were</y></div>
<div class="ln" style="top:462.8px;left:125px;width:355px;letter-spacing:0.26px"><y>in control for several generations after Manzikert, of-</y></div>
<div class="ln" style="top:480.9px;left:125px;width:355px;letter-spacing:0.50px"><y>ten in rivalry and sometimes in direct confrontation</y></div>
<div class="ln" style="top:499.0px;left:125px;width:355px;letter-spacing:0.12px"><y>with the Seljuks.</y> The Seljuks themselves seem to have</div>
<div class="ln" style="top:517.1px;left:125px;width:355px;letter-spacing:0.52px">been conscious of their graduation to a higher level</div>
<div class="ln" style="top:535.2px;left:125px;width:355px;letter-spacing:0.27px">of rulership in the age of Kılıç Arslan II (r. 1155–92),</div>
<div class="ln" style="top:553.3px;left:125px;width:355px;letter-spacing:0.55px">who eliminated the Danishmendids in 1177 and es-</div>
<div class="ln" style="top:571.4px;left:125px;width:355px;letter-spacing:0.50px">tablished a semblance of political unity in the lands</div>
<div class="ln" style="top:589.5px;left:125px;width:355px;letter-spacing:0.41px">of Rum. <y>The practice of naming Rum Seljuk princes</y></div>
<div class="ln" style="top:607.6px;left:125px;width:355px;letter-spacing:0.36px"><y>after the heroes of ancient Persian imperial epics be-</y></div>
<div class="ln" style="top:625.7px;left:125px;width:355px;letter-spacing:0.20px"><y>gan during his reign, which also witnessed the demise</y></div>
<div class="ln" style="top:643.8px;left:125px;width:355px;letter-spacing:0.55px"><y>of the Great Seljuks of Iran.</y><sup>4</sup> So long as the latter</div>
<div class="ln" style="top:661.9px;left:125px;width:355px;letter-spacing:0.55px">maintained power, the Anatolian branch was bound</div>
<div class="ln" style="top:680.0px;left:125px;width:355px;letter-spacing:0.37px">to remain the lesser one. Even after Kılıç Arslan, the</div>
<div class="ln" style="top:698.1px;left:125px;width:355px;letter-spacing:0.38px"><y>period between 1192 and 1205 can be deemed an in-</y></div>
<div class="ln" style="top:716.2px;left:125px;width:355px;letter-spacing:0.52px"><y>terregnum</y>, and the Seljuks’ power was on the wane</div>
<div class="ln" style="top:734.3px;left:125px;width:355px;letter-spacing:0.12px">after 1243, when Mongol armies defeated them. Ilkha-</div>
<div class="ln" style="top:752.4px;left:125px;width:355px;letter-spacing:0.36px">nid-Mongol rule in Asia Minor turned more direct in</div>
<div class="ln" style="top:770.5px;left:125px;width:355px;letter-spacing:0.18px">1277, only a year after <y>Baybars, the Mamluk sultan of</y></div>
<div class="ln" style="top:788.6px;left:125px;width:355px;letter-spacing:0.23px"><y>Egypt and Syria, marched all the way into Kayseri</y>, in</div>
<div class="ln" style="top:806.7px;left:125px;width:355px;letter-spacing:0.33px"><c>a context that clearly signaled to the oligarchic elites</c></div>
<div class="ln" style="top:824.8px;left:125px;width:355px;letter-spacing:0.38px"><c>of the late Seljuk era and to leaders of the Turcoman</c></div>
<div class="ln" style="top:842.9px;left:125px;width:355px;letter-spacing:0.40px"><c>tribes that the political future of the peninsula might</c></div>
<div class="ln" style="top:861.0px;left:125px;width:355px;letter-spacing:0.55px"><c>be redesigned without much Seljuk input.</c> Compet-</div>
<div class="ln" style="top:879.1px;left:125px;width:355px;letter-spacing:0.55px">itive principalities emerged under the leadership of</div>
<div class="ln" style="top:897.2px;left:125px;width:355px;letter-spacing:0.10px"><i>beg</i>s (modern Turkish <i>bey</i>, chieftain or lord) from both</div>
<div class="ln" style="top:915.3px;left:125px;width:355px;letter-spacing:0.30px">Seljuk elite and Turcoman backgrounds and included</div>
<div class="ln last" style="top:933.4px;left:125px;width:355px;letter-spacing:0.55px">one under a certain Osman Beg.</div>
<div class="ln" style="top:951.5px;left:142px;width:338px;letter-spacing:0.55px">In considering the vicissitudes of Seljuk rule, <y>it</y></div>
<div class="ln" style="top:969.6px;left:125px;width:355px;letter-spacing:0.43px"><y>is important to note that the heartlands of the Seljuk</y></div>
<div class="ln" style="top:987.7px;left:125px;width:355px;letter-spacing:0.46px"><y>the late twelfth century, the word “Turchia” appears</y></div>
<div class="ln" style="top:1005.8px;left:125px;width:355px;letter-spacing:0.35px"><y>on a Latin map as a caption on Asia Minor, a harbin-</y></div>
<div class="ln" style="top:1023.9px;left:125px;width:355px;letter-spacing:0.34px"><y>ger of future European-language usages such as “Ot-</y></div>
<div class="ln" style="top:1042.0px;left:125px;width:355px;letter-spacing:0.35px">toman Turkey” or “European and Asiatic Turkey” all</div>
<div class="ln" style="top:1060.1px;left:125px;width:355px;letter-spacing:0.23px">the way into the early twentieth century. A similar us-</div>
<div class="ln" style="top:1078.2px;left:125px;width:355px;letter-spacing:0.39px">age can be located in Arabic sources, as in the travel</div>
<div class="ln" style="top:1096.3px;left:125px;width:355px;letter-spacing:0.55px">book of Ibn Battuta, whose account of Anatolia in</div>
<div class="ln" style="top:1114.4px;left:125px;width:355px;letter-spacing:0.10px">the 1330s introduces the region as <i>barr al-Turkiyya al-</i></div><div class="ln" style="top:191.3px;left:498px;width:355px;letter-spacing:0.55px">ally considered to be the Ottoman core lands. It is</div>
<div class="ln" style="top:209.4px;left:498px;width:355px;letter-spacing:0.54px">also worth applying some caution in using the term</div>
<div class="ln" style="top:227.5px;left:498px;width:355px;letter-spacing:0.53px"><y>“Turkish Anatolia,” because not all Anatolian Mus-</y></div>
<div class="ln" style="top:245.6px;left:498px;width:355px;letter-spacing:0.29px"><y>lims, rulers or subjects, were necessarily Turkish in a</y></div>
<div class="ln" style="top:263.7px;left:498px;width:355px;letter-spacing:0.07px"><y>strict ethnic sense.</y> Admittedly, <c>terms like “Turco-Mus-</c></div>
<div class="ln" style="top:281.8px;left:498px;width:355px;letter-spacing:-0.03px"><c>lim Anatolia” or “Turkish-speaking Muslims” are inele-</c></div>
<div class="ln" style="top:299.9px;left:498px;width:355px;letter-spacing:0.24px"><c>gant when compared to “Seljuk Anatolia” or “Turks,”</c></div>
<div class="ln" style="top:318.0px;left:498px;width:355px;letter-spacing:0.55px"><c>but historical accuracy sometimes does not warrant</c></div>
<div class="ln" style="top:336.1px;left:498px;width:355px;letter-spacing:0.14px"><c>such shortcuts.</c> At any rate, these qualifications should</div>
<div class="ln" style="top:354.2px;left:498px;width:355px;letter-spacing:0.32px">not in any way detract from the profound association</div>
<div class="ln" style="top:372.3px;left:498px;width:355px;letter-spacing:0.32px">that emerged over time between the historical setting</div>
<div class="ln" style="top:390.4px;left:498px;width:355px;letter-spacing:0.34px">and the Turkish identity scrutinized here. <y>As early as</y></div>
<div class="ln" style="top:408.5px;left:498px;width:355px;letter-spacing:0.46px"><y>the late twelfth century, the word “Turchia”</y> appears</div>
<div class="ln" style="top:426.6px;left:498px;width:355px;letter-spacing:0.35px">on a Latin map as a caption on Asia Minor, a harbin-</div>
<div class="ln" style="top:444.7px;left:498px;width:355px;letter-spacing:0.34px">ger of future European-language usages such as “Ot-</div>
<div class="ln" style="top:462.8px;left:498px;width:355px;letter-spacing:0.35px">toman Turkey” or “European and Asiatic Turkey” all</div>
<div class="ln" style="top:480.9px;left:498px;width:355px;letter-spacing:0.23px">the way into the early twentieth century. A similar us-</div>
<div class="ln" style="top:499.0px;left:498px;width:355px;letter-spacing:0.39px">age can be located in Arabic sources, as in the travel</div>
<div class="ln" style="top:517.1px;left:498px;width:355px;letter-spacing:0.55px">book of <y>Ibn Battuta</y>, whose <y>account of Anatolia in</y></div>
<div class="ln" style="top:535.2px;left:498px;width:355px;letter-spacing:0.10px"><y>the 1330s introduces the region as <i>barr al-Turkiyya al-</i></y></div>
<div class="ln" style="top:553.3px;left:498px;width:355px;letter-spacing:0.09px"><y><i>maʿrūf bi-bilād al-Rūm</i> (the Turkish land known as the</y></div>
<div class="ln" style="top:571.4px;left:498px;width:355px;letter-spacing:0.23px"><y>lands of Rum).</y><sup>6</sup> <c>A historicized approach cannot</c>, how-</div>
<div class="ln" style="top:589.5px;left:498px;width:355px;letter-spacing:0.34px">ever, overlook the fact that it is <y>only in the aftermath</y></div>
<div class="ln" style="top:607.6px;left:498px;width:355px;letter-spacing:0.46px"><y>of the First World War that the predominantly Turk-</y></div>
<div class="ln" style="top:625.7px;left:498px;width:355px;letter-spacing:0.25px"><y>ish-speaking Muslims of the peninsula, now adopting</y></div>
<div class="ln" style="top:643.8px;left:498px;width:355px;letter-spacing:0.38px"><y>wholesale the self-designation “Turk,” embraced the</y></div>
<div class="ln last" style="top:661.9px;left:498px;width:355px;letter-spacing:0.55px"><y>word “Türkiye” for their country.</y></div>
<div class="ln" style="top:680.0px;left:515px;width:338px;letter-spacing:0.13px">Based on such considerations, <c>some students of late</c></div>
<div class="ln" style="top:698.1px;left:498px;width:355px;letter-spacing:0.52px"><c>medieval (<i>ṭavāʾif</i>-era) Anatolian and Ottoman stud-</c></div>
<div class="ln" style="top:716.2px;left:498px;width:355px;letter-spacing:0.55px"><c>ies have been trying to move beyond a critique of</c></div>
<div class="ln" style="top:734.3px;left:498px;width:355px;letter-spacing:0.55px"><c>the nationist and statist paradigms and to develop,</c></div>
<div class="ln" style="top:752.4px;left:498px;width:355px;letter-spacing:0.55px"><c>or to forge out of that critique, a more historicized</c></div>
<div class="ln" style="top:770.5px;left:498px;width:355px;letter-spacing:0.24px"><c>perspective on the dizzyingly complex realities of the</c></div>
<div class="ln" style="top:788.6px;left:498px;width:355px;letter-spacing:0.43px"><c>lands that we study, without assuming the fixity and</c></div>
<div class="ln" style="top:806.7px;left:498px;width:355px;letter-spacing:0.18px"><c>transparency of categories like “Turkish” or “Islamic”</c></div>
<div class="ln" style="top:824.8px;left:498px;width:355px;letter-spacing:0.33px"><c>in designating and analyzing cultural processes.</c> <y>This</y></div>
<div class="ln" style="top:842.9px;left:498px;width:355px;letter-spacing:0.55px"><y>approach is driven by a search for a new historical</y></div>
<div class="ln" style="top:861.0px;left:498px;width:355px;letter-spacing:0.55px"><y>geography and cultural history of identity in south-</y></div>
<div class="ln" style="top:879.1px;left:498px;width:355px;letter-spacing:0.41px"><y>western Asia and southeastern Europe (after a point,</y></div>
<div class="ln" style="top:897.2px;left:498px;width:355px;letter-spacing:0.55px"><y>the realm of the Ottoman empire) in the late medi-</y></div>
<div class="ln" style="top:915.3px;left:498px;width:355px;letter-spacing:0.55px"><y>eval and early modern periods: hence the focus on</y></div>
<div class="ln last" style="top:933.4px;left:498px;width:355px;letter-spacing:0.55px"><y>Rum and Rumi.</y><sup>7</sup></div>
<div class="ln" style="top:951.5px;left:515px;width:338px;letter-spacing:0.19px">The word “Rum” or <i>diyār-ı Rūm</i> for defining a cul-</div>
<div class="ln" style="top:969.6px;left:498px;width:355px;letter-spacing:0.52px">been conscious of their graduation to a higher level</div>
<div class="ln" style="top:987.7px;left:498px;width:355px;letter-spacing:0.27px">of rulership in the age of Kılıç Arslan II (r. 1155–92),</div>
<div class="ln" style="top:1005.8px;left:498px;width:355px;letter-spacing:0.55px">who eliminated the Danishmendids in 1177 and es-</div>
<div class="ln" style="top:1023.9px;left:498px;width:355px;letter-spacing:0.50px">tablished a semblance of political unity in the lands</div>
<div class="ln" style="top:1042.0px;left:498px;width:355px;letter-spacing:0.41px">of Rum. The practice of naming Rum Seljuk princes</div>
<div class="ln" style="top:1060.1px;left:498px;width:355px;letter-spacing:0.55px">maintained power, the Anatolian branch was bound</div>
<div class="ln" style="top:1078.2px;left:498px;width:355px;letter-spacing:0.37px">to remain the lesser one. Even after Kılıç Arslan, the</div>
<div class="ln" style="top:1096.3px;left:498px;width:355px;letter-spacing:0.12px">after 1243, when Mongol armies defeated them. Ilkha-</div><div class="a" style="left:0;top:0;width:1024px;height:155px;background:rgba(0,0,0,0.28)"></div><div class="a" style="left:0;top:972px;width:1024px;height:431px;background:rgba(0,0,0,0.28)"></div></div>
<div class="a" style="left:91px;top:701px;width:93px;height:76px;border:1px solid #333"></div>
<div class="a" style="left:100px;top:722px;width:3px;height:3px;border-radius:50%;background:#fdc713"></div><div class="a" style="left:172px;top:714px;width:3px;height:3px;border-radius:50%;background:#fdc713"></div><div class="a" style="left:172px;top:765px;width:3px;height:3px;border-radius:50%;background:#fdc713"></div><div class="a" style="left:101px;top:776px;width:3px;height:3px;border-radius:50%;background:#fdc713"></div>
<div class="a" style="left:178px;top:771px;width:7px;height:7px;background:#2a2a2a"></div>
<div class="a" style="left:131px;top:822px;font-size:15px;color:#f0f0f0">3</div>
<div class="a thumbpg" style="left:92px;top:870px;width:1024px;height:1403px;transform:scale(0.0898);transform-origin:0 0;background:#fff;overflow:hidden;box-shadow:0 1px 2px #222"><div class="a" style="left:120px;top:80px;width:260px;height:18px;background:linear-gradient(90deg,#111 0%,#333 40%,#999 70%,#ddd 100%);border:3px solid #333"></div><div class="a" style="left:650px;top:80px;width:250px;height:18px;background:linear-gradient(90deg,#d6c21c 0 12%,#1d8ab0 12% 25%,#333a8a 25% 37%,#b0204a 37% 50%,#222 50% 62%,#e0d040 62% 75%,#9cc4d8 75% 87%,#c8a8c8 87%);border:3px solid #333"></div><div class="a" style="left:45px;top:95px;width:40px;height:3px;background:#333"></div><div class="a" style="left:955px;top:95px;width:40px;height:3px;background:#333"></div><div class="a" style="left:45px;top:1310px;width:40px;height:3px;background:#333"></div><div class="a" style="left:955px;top:1310px;width:40px;height:3px;background:#333"></div><div class="a" style="left:115px;top:1320px;width:80px;height:10px;background:#555"></div><div class="a" style="left:820px;top:1320px;width:80px;height:10px;background:#555"></div><div class="a" style="left:10px;top:690px;width:24px;height:24px;border-radius:50%;border:3px solid #666"></div><div class="a" style="left:990px;top:690px;width:24px;height:24px;border-radius:50%;border:3px solid #666"></div><div class="a" style="left:500px;top:1310px;width:24px;height:24px;border-radius:50%;border:3px solid #666"></div><div class="a" style="left:500px;top:95px;width:24px;height:24px;border-radius:50%;border:3px solid #666"></div><div class="ln" style="top:216.0px;left:174px;width:355px;letter-spacing:0.55px">who eliminated the Danishmendids in 1177 and es-</div>
<div class="ln" style="top:234.1px;left:174px;width:355px;letter-spacing:0.50px">tablished a semblance of political unity in the lands</div>
<div class="ln" style="top:252.2px;left:174px;width:355px;letter-spacing:0.41px">of Rum. The practice of naming Rum Seljuk princes</div>
<div class="ln" style="top:270.3px;left:174px;width:355px;letter-spacing:0.36px">after the heroes of ancient Persian imperial epics be-</div>
<div class="ln" style="top:288.4px;left:174px;width:355px;letter-spacing:0.20px"><y>gan during his reign, which also witnessed the demise</y></div>
<div class="ln" style="top:306.5px;left:174px;width:355px;letter-spacing:0.55px"><y>of the Great Seljuks of Iran.<sup>4</sup> So long as the latter</y></div>
<div class="ln" style="top:324.6px;left:174px;width:355px;letter-spacing:0.55px"><y>maintained power, the Anatolian branch was bound</y></div>
<div class="ln" style="top:342.7px;left:174px;width:355px;letter-spacing:0.37px"><y>to remain the lesser one. Even after Kılıç Arslan, the</y></div>
<div class="ln" style="top:360.8px;left:174px;width:355px;letter-spacing:0.38px">period between 1192 and 1205 can be deemed an in-</div>
<div class="ln" style="top:378.9px;left:174px;width:355px;letter-spacing:0.52px">terregnum, and the Seljuks’ power was on the wane</div>
<div class="ln" style="top:397.0px;left:174px;width:355px;letter-spacing:0.12px">after 1243, when Mongol armies defeated them. Ilkha-</div>
<div class="ln" style="top:415.1px;left:174px;width:355px;letter-spacing:0.36px">nid-Mongol rule in Asia Minor turned more direct in</div>
<div class="ln" style="top:433.2px;left:174px;width:355px;letter-spacing:0.18px">1277, only a year after Baybars, the Mamluk sultan of</div>
<div class="ln" style="top:451.3px;left:174px;width:355px;letter-spacing:0.23px">Egypt and Syria, marched all the way into Kayseri, in</div>
<div class="ln" style="top:469.4px;left:174px;width:355px;letter-spacing:0.33px">a context that clearly signaled to the oligarchic elites</div>
<div class="ln" style="top:487.5px;left:174px;width:355px;letter-spacing:0.38px">of the late Seljuk era and to leaders of the Turcoman</div>
<div class="ln" style="top:505.6px;left:174px;width:355px;letter-spacing:0.40px">tribes that the political future of the peninsula might</div>
<div class="ln" style="top:523.7px;left:174px;width:355px;letter-spacing:0.55px">be redesigned without much Seljuk input. Compet-</div>
<div class="ln" style="top:541.8px;left:174px;width:355px;letter-spacing:0.55px">itive principalities emerged under the leadership of</div>
<div class="ln" style="top:559.9px;left:174px;width:355px;letter-spacing:0.10px"><i>beg</i>s (modern Turkish <i>bey</i>, chieftain or lord) from both</div>
<div class="ln" style="top:578.0px;left:174px;width:355px;letter-spacing:0.30px">Seljuk elite and Turcoman backgrounds and included</div>
<div class="ln" style="top:596.1px;left:174px;width:355px;letter-spacing:0.55px">one under a certain Osman Beg.</div>
<div class="ln" style="top:614.2px;left:174px;width:355px;letter-spacing:0.55px">In considering the vicissitudes of Seljuk rule, it</div>
<div class="ln" style="top:632.3px;left:174px;width:355px;letter-spacing:0.43px">is important to note that the heartlands of the Seljuk</div>
<div class="ln" style="top:650.4px;left:174px;width:355px;letter-spacing:0.55px">who eliminated the Danishmendids in 1177 and es-</div>
<div class="ln" style="top:668.5px;left:174px;width:355px;letter-spacing:0.50px">tablished a semblance of political unity in the lands</div>
<div class="ln" style="top:686.6px;left:174px;width:355px;letter-spacing:0.41px"><y>of Rum. The practice of naming Rum Seljuk princes</y></div>
<div class="ln" style="top:704.7px;left:174px;width:355px;letter-spacing:0.36px"><y>after the heroes of ancient Persian imperial epics be-</y></div>
<div class="ln" style="top:722.8px;left:174px;width:355px;letter-spacing:0.20px"><y>gan during his reign, which also witnessed the demise</y></div>
<div class="ln" style="top:740.9px;left:174px;width:355px;letter-spacing:0.55px"><y>of the Great Seljuks of Iran.<sup>4</sup> So long as the latter</y></div>
<div class="ln" style="top:759.0px;left:174px;width:355px;letter-spacing:0.55px"><y>maintained power, the Anatolian branch was bound</y></div>
<div class="ln" style="top:777.1px;left:174px;width:355px;letter-spacing:0.37px"><y>to remain the lesser one. Even after Kılıç Arslan, the</y></div>
<div class="ln" style="top:795.2px;left:174px;width:355px;letter-spacing:0.38px"><y>period between 1192 and 1205 can be deemed an in-</y></div>
<div class="ln" style="top:813.3px;left:174px;width:355px;letter-spacing:0.52px"><y>terregnum, and the Seljuks’ power was on the wane</y></div>
<div class="ln" style="top:831.4px;left:174px;width:355px;letter-spacing:0.12px"><y>after 1243, when Mongol armies defeated them. Ilkha-</y></div>
<div class="ln" style="top:849.5px;left:174px;width:355px;letter-spacing:0.36px">nid-Mongol rule in Asia Minor turned more direct in</div>
<div class="ln" style="top:867.6px;left:174px;width:355px;letter-spacing:0.18px">1277, only a year after Baybars, the Mamluk sultan of</div>
<div class="ln" style="top:885.7px;left:174px;width:355px;letter-spacing:0.23px">Egypt and Syria, marched all the way into Kayseri, in</div>
<div class="ln" style="top:903.8px;left:174px;width:355px;letter-spacing:0.33px">a context that clearly signaled to the oligarchic elites</div>
<div class="ln" style="top:921.9px;left:174px;width:355px;letter-spacing:0.38px">of the late Seljuk era and to leaders of the Turcoman</div>
<div class="ln" style="top:940.0px;left:174px;width:355px;letter-spacing:0.40px">tribes that the political future of the peninsula might</div>
<div class="ln" style="top:958.1px;left:174px;width:355px;letter-spacing:0.55px">be redesigned without much Seljuk input. Compet-</div>
<div class="ln" style="top:976.2px;left:174px;width:355px;letter-spacing:0.55px">itive principalities emerged under the leadership of</div>
<div class="ln" style="top:994.3px;left:174px;width:355px;letter-spacing:0.10px"><i>beg</i>s (modern Turkish <i>bey</i>, chieftain or lord) from both</div>
<div class="ln" style="top:1012.4px;left:174px;width:355px;letter-spacing:0.30px">Seljuk elite and Turcoman backgrounds and included</div>
<div class="ln" style="top:1030.5px;left:174px;width:355px;letter-spacing:0.55px">one under a certain Osman Beg.</div>
<div class="ln" style="top:1048.6px;left:174px;width:355px;letter-spacing:0.55px">In considering the vicissitudes of Seljuk rule, it</div>
<div class="ln" style="top:1066.7px;left:174px;width:355px;letter-spacing:0.43px">is important to note that the heartlands of the Seljuk</div>
<div class="ln" style="top:1084.8px;left:174px;width:355px;letter-spacing:0.55px">who eliminated the Danishmendids in 1177 and es-</div>
<div class="ln" style="top:1102.9px;left:174px;width:355px;letter-spacing:0.50px">tablished a semblance of political unity in the lands</div><div class="ln" style="top:216.0px;left:546px;width:355px;letter-spacing:0.24px">gant when compared to “Seljuk Anatolia” or “Turks,”</div>
<div class="ln" style="top:234.1px;left:546px;width:355px;letter-spacing:0.55px">but historical accuracy sometimes does not warrant</div>
<div class="ln" style="top:252.2px;left:546px;width:355px;letter-spacing:0.14px">such shortcuts. At any rate, these qualifications should</div>
<div class="ln" style="top:270.3px;left:546px;width:355px;letter-spacing:0.32px">not in any way detract from the profound association</div>
<div class="ln" style="top:288.4px;left:546px;width:355px;letter-spacing:0.32px">that emerged over time between the historical setting</div>
<div class="ln" style="top:306.5px;left:546px;width:355px;letter-spacing:0.35px">and the Turkish identity scrutinized here. As early as</div>
<div class="ln" style="top:324.6px;left:546px;width:355px;letter-spacing:0.46px">the late twelfth century, the word “Turchia” appears</div>
<div class="ln" style="top:342.7px;left:546px;width:355px;letter-spacing:0.35px">on a Latin map as a caption on Asia Minor, a harbin-</div>
<div class="ln" style="top:360.8px;left:546px;width:355px;letter-spacing:0.34px">ger of future European-language usages such as “Ot-</div>
<div class="ln" style="top:378.9px;left:546px;width:355px;letter-spacing:0.35px"><y>toman Turkey” or “European and Asiatic Turkey” all</y></div>
<div class="ln" style="top:397.0px;left:546px;width:355px;letter-spacing:0.23px"><y>the way into the early twentieth century. A similar us-</y></div>
<div class="ln" style="top:415.1px;left:546px;width:355px;letter-spacing:0.39px"><y>age can be located in Arabic sources, as in the travel</y></div>
<div class="ln" style="top:433.2px;left:546px;width:355px;letter-spacing:0.55px"><c>book of Ibn Battuta, whose account of Anatolia in</c></div>
<div class="ln" style="top:451.3px;left:546px;width:355px;letter-spacing:0.10px"><c>the 1330s introduces the region as <i>barr al-Turkiyya al-</i></c></div>
<div class="ln" style="top:469.4px;left:546px;width:355px;letter-spacing:0.09px"><c><i>maʿrūf bi-bilād al-Rūm</i> (the Turkish land known as the</c></div>
<div class="ln" style="top:487.5px;left:546px;width:355px;letter-spacing:0.24px"><c>lands of Rum).<sup>6</sup> A historicized approach cannot, how-</c></div>
<div class="ln" style="top:505.6px;left:546px;width:355px;letter-spacing:0.34px">ever, overlook the fact that it is only in the aftermath</div>
<div class="ln" style="top:523.7px;left:546px;width:355px;letter-spacing:0.46px">of the First World War that the predominantly Turk-</div>
<div class="ln" style="top:541.8px;left:546px;width:355px;letter-spacing:0.25px"><y>ish-speaking Muslims of the peninsula, now adopting</y></div>
<div class="ln" style="top:559.9px;left:546px;width:355px;letter-spacing:0.38px"><y>wholesale the self-designation “Turk,” embraced the</y></div>
<div class="ln" style="top:578.0px;left:546px;width:355px;letter-spacing:0.55px"><y>word “Türkiye” for their country.</y></div>
<div class="ln" style="top:596.1px;left:546px;width:355px;letter-spacing:0.47px"><y>Based on such considerations, some students of late</y></div>
<div class="ln" style="top:614.2px;left:546px;width:355px;letter-spacing:0.52px"><y>medieval (<i>ṭavāʾif</i>-era) Anatolian and Ottoman stud-</y></div>
<div class="ln" style="top:632.3px;left:546px;width:355px;letter-spacing:0.55px">ies have been trying to move beyond a critique of</div>
<div class="ln" style="top:650.4px;left:546px;width:355px;letter-spacing:0.55px">the nationist and statist paradigms and to develop,</div>
<div class="ln" style="top:668.5px;left:546px;width:355px;letter-spacing:0.55px"><y>or to forge out of that critique, a more historicized</y></div>
<div class="ln" style="top:686.6px;left:546px;width:355px;letter-spacing:0.24px"><y>perspective on the dizzyingly complex realities of the</y></div>
<div class="ln" style="top:704.7px;left:546px;width:355px;letter-spacing:0.43px"><y>lands that we study, without assuming the fixity and</y></div>
<div class="ln" style="top:722.8px;left:546px;width:355px;letter-spacing:0.18px">transparency of categories like “Turkish” or “Islamic”</div>
<div class="ln" style="top:740.9px;left:546px;width:355px;letter-spacing:0.33px">in designating and analyzing cultural processes. This</div>
<div class="ln" style="top:759.0px;left:546px;width:355px;letter-spacing:0.55px">approach is driven by a search for a new historical</div>
<div class="ln" style="top:777.1px;left:546px;width:355px;letter-spacing:0.55px">geography and cultural history of identity in south-</div>
<div class="ln" style="top:795.2px;left:546px;width:355px;letter-spacing:0.41px">western Asia and southeastern Europe (after a point,</div>
<div class="ln" style="top:813.3px;left:546px;width:355px;letter-spacing:0.55px">the realm of the Ottoman empire) in the late medi-</div>
<div class="ln" style="top:831.4px;left:546px;width:355px;letter-spacing:0.55px">eval and early modern periods: hence the focus on</div>
<div class="ln" style="top:849.5px;left:546px;width:355px;letter-spacing:0.55px">Rum and Rumi.<sup>7</sup></div>
<div class="ln" style="top:867.6px;left:546px;width:355px;letter-spacing:0.54px">The word “Rum” or <i>diyār-ı Rūm</i> for defining a cul-</div>
<div class="ln" style="top:885.7px;left:546px;width:355px;letter-spacing:0.24px">gant when compared to “Seljuk Anatolia” or “Turks,”</div>
<div class="ln" style="top:903.8px;left:546px;width:355px;letter-spacing:0.55px">but historical accuracy sometimes does not warrant</div>
<div class="ln" style="top:921.9px;left:546px;width:355px;letter-spacing:0.14px">such shortcuts. At any rate, these qualifications should</div>
<div class="ln" style="top:940.0px;left:546px;width:355px;letter-spacing:0.32px">not in any way detract from the profound association</div>
<div class="ln" style="top:958.1px;left:546px;width:355px;letter-spacing:0.32px">that emerged over time between the historical setting</div>
<div class="ln" style="top:976.2px;left:546px;width:355px;letter-spacing:0.35px">and the Turkish identity scrutinized here. As early as</div>
<div class="ln" style="top:994.3px;left:546px;width:355px;letter-spacing:0.46px">the late twelfth century, the word “Turchia” appears</div>
<div class="ln" style="top:1012.4px;left:546px;width:355px;letter-spacing:0.35px">on a Latin map as a caption on Asia Minor, a harbin-</div>
<div class="ln" style="top:1030.5px;left:546px;width:355px;letter-spacing:0.34px">ger of future European-language usages such as “Ot-</div>
<div class="ln" style="top:1048.6px;left:546px;width:355px;letter-spacing:0.35px">toman Turkey” or “European and Asiatic Turkey” all</div>
<div class="ln" style="top:1066.7px;left:546px;width:355px;letter-spacing:0.23px">the way into the early twentieth century. A similar us-</div>
<div class="ln" style="top:1084.8px;left:546px;width:355px;letter-spacing:0.39px">age can be located in Arabic sources, as in the travel</div>
<div class="ln" style="top:1102.9px;left:546px;width:355px;letter-spacing:0.55px">book of Ibn Battuta, whose account of Anatolia in</div></div>
<div class="a" style="left:104px;top:899px;width:3px;height:3px;border-radius:50%;background:#fdc713"></div>
<div class="a" style="left:62px;top:978px;width:144px;height:18px;background:#444"></div>
<div class="a" style="left:78px;top:983px;width:105px;height:10px;border-radius:5px;background:#7b7b7b"></div>
<div class="a" style="left:205px;top:978px;width:18px;height:18px;background:#3c3c3c"></div>
<svg style="left:237px;top:585px" width="10" height="14" viewBox="0 0 10 14"><path d="M9 0 L9 14 L1 7Z" fill="#c0c0c0"/></svg>
<div class="a" id="pagebg" style="left:253px;top:184px;width:1024px;height:816px;background:#fff"></div>
<div class="a" style="left:540px;top:196px;width:404px;font-family:'Liberation Serif',serif;font-size:11.3px;letter-spacing:1.13px;word-spacing:1px;color:#1a1a1a;-webkit-text-stroke:0.12px #1a1a1a;white-space:nowrap">CULTURAL GEOGRAPHY AND IDENTITY IN THE LANDS OF RUM</div>
<div class="a" style="left:1097px;top:193px;font-family:'Liberation Serif',serif;font-size:15px;color:#222">9</div>
<svg style="left:277px;top:700px" width="20" height="20" viewBox="0 0 20 20"><circle cx="10" cy="10" r="7.5" stroke="#222" stroke-width="1" fill="none"/><circle cx="10" cy="10" r="4.2" fill="#111"/><path d="M10 1 L10 19 M1 10 L19 10" stroke="#222" stroke-width="0.9"/><path d="M10 6 L10 14 M6 10 L14 10" stroke="#fff" stroke-width="0.9"/></svg>
<svg style="left:1233px;top:700px" width="20" height="20" viewBox="0 0 20 20"><circle cx="10" cy="10" r="7.5" stroke="#222" stroke-width="1" fill="none"/><circle cx="10" cy="10" r="4.2" fill="#111"/><path d="M10 1 L10 19 M1 10 L19 10" stroke="#222" stroke-width="0.9"/><path d="M10 6 L10 14 M6 10 L14 10" stroke="#fff" stroke-width="0.9"/></svg>
<div class="ln" style="top:219.5px;left:378px;width:355px;letter-spacing:0.55px">after, <c>ruled over a relatively unified Turco-Muslim</c></div>
<div class="ln" style="top:237.6px;left:378px;width:355px;letter-spacing:0.55px"><c>Anatolia</c> for only a few decades during that period.</div>
<div class="ln" style="top:255.7px;left:378px;width:355px;letter-spacing:0.41px"><y>Ibn Bibi, for instance, who wrote the only history of</y></div>
<div class="ln" style="top:273.8px;left:378px;width:355px;letter-spacing:0.50px"><y>the Seljuks of Rum that might be considered an im-</y></div>
<div class="ln" style="top:291.9px;left:378px;width:355px;letter-spacing:0.35px"><y>perial chronicle</y>, starts his book with the reign of Gi-</div>
<div class="ln" style="top:310.0px;left:378px;width:355px;letter-spacing:0.55px">yaseddin Keyhusrev (r. 1192–96, 1205–11). In his</div>
<div class="ln" style="top:328.1px;left:378px;width:355px;letter-spacing:0.55px">thoughtful <y>introduction, Ibn Bibi justifies</y> his start-</div>
<div class="ln" style="top:346.2px;left:378px;width:355px;letter-spacing:0.55px">ing point by saying that he is uncertain of how to</div>
<div class="ln" style="top:364.3px;left:378px;width:355px;letter-spacing:0.55px">organize the earlier materials, since he finds them</div>
<div class="ln" style="top:382.4px;left:378px;width:355px;letter-spacing:0.55px"><c>confusing in their apportioning of the roles of con-</c></div>
<div class="ln" style="top:400.5px;left:378px;width:355px;letter-spacing:0.44px"><c>queror and sovereign among the Seljuks and mighty</c></div>
<div class="ln" style="top:418.6px;left:378px;width:355px;letter-spacing:0.55px"><c>emirs like Mengücek, Artuk, and Danishmend.</c><sup>3</sup> <y>In</y></div>
<div class="ln" style="top:436.7px;left:378px;width:355px;letter-spacing:0.55px"><y>much of the territory designated as Seljuk Anatolia</y></div>
<div class="ln" style="top:454.8px;left:378px;width:355px;letter-spacing:0.50px"><y>by modern scholarly convention, dynasties founded</y></div>
<div class="ln" style="top:472.9px;left:378px;width:355px;letter-spacing:0.27px"><y>by those emirs, particularly the Danishmendids, were</y></div>
<div class="ln" style="top:491.0px;left:378px;width:355px;letter-spacing:0.26px"><y>in control for several generations after Manzikert, of-</y></div>
<div class="ln" style="top:509.1px;left:378px;width:355px;letter-spacing:0.50px"><y>ten in rivalry and sometimes in direct confrontation</y></div>
<div class="ln" style="top:527.2px;left:378px;width:355px;letter-spacing:0.12px"><y>with the Seljuks.</y> The Seljuks themselves seem to have</div>
<div class="ln" style="top:545.3px;left:378px;width:355px;letter-spacing:0.52px">been conscious of their graduation to a higher level</div>
<div class="ln" style="top:563.4px;left:378px;width:355px;letter-spacing:0.27px">of rulership in the age of Kılıç Arslan II (r. 1155–92),</div>
<div class="ln" style="top:581.5px;left:378px;width:355px;letter-spacing:0.55px">who eliminated the Danishmendids in 1177 and es-</div>
<div class="ln" style="top:599.6px;left:378px;width:355px;letter-spacing:0.50px">tablished a semblance of political unity in the lands</div>
<div class="ln" style="top:617.7px;left:378px;width:355px;letter-spacing:0.41px">of Rum. <y>The practice of naming Rum Seljuk princes</y></div>
<div class="ln" style="top:635.8px;left:378px;width:355px;letter-spacing:0.36px"><y>after the heroes of ancient Persian imperial epics be-</y></div>
<div class="ln" style="top:653.9px;left:378px;width:355px;letter-spacing:0.20px"><y>gan during his reign, which also witnessed the demise</y></div>
<div class="ln" style="top:672.0px;left:378px;width:355px;letter-spacing:0.55px"><y>of the Great Seljuks of Iran.</y><sup>4</sup> So long as the latter</div>
<div class="ln" style="top:690.1px;left:378px;width:355px;letter-spacing:0.55px">maintained power, the Anatolian branch was bound</div>
<div class="ln" style="top:708.2px;left:378px;width:355px;letter-spacing:0.37px">to remain the lesser one. Even after Kılıç Arslan, the</div>
<div class="ln" style="top:726.3px;left:378px;width:355px;letter-spacing:0.38px"><y>period between 1192 and 1205 can be deemed an in-</y></div>
<div class="ln" style="top:744.4px;left:378px;width:355px;letter-spacing:0.52px"><y>terregnum</y>, and the Seljuks’ power was on the wane</div>
<div class="ln" style="top:762.5px;left:378px;width:355px;letter-spacing:0.12px">after 1243, when Mongol armies defeated them. Ilkha-</div>
<div class="ln" style="top:780.6px;left:378px;width:355px;letter-spacing:0.36px">nid-Mongol rule in Asia Minor turned more direct in</div>
<div class="ln" style="top:798.7px;left:378px;width:355px;letter-spacing:0.18px">1277, only a year after <y>Baybars, the Mamluk sultan of</y></div>
<div class="ln" style="top:816.8px;left:378px;width:355px;letter-spacing:0.23px"><y>Egypt and Syria, marched all the way into Kayseri</y>, in</div>
<div class="ln" style="top:834.9px;left:378px;width:355px;letter-spacing:0.33px"><c>a context that clearly signaled to the oligarchic elites</c></div>
<div class="ln" style="top:853.0px;left:378px;width:355px;letter-spacing:0.38px"><c>of the late Seljuk era and to leaders of the Turcoman</c></div>
<div class="ln" style="top:871.1px;left:378px;width:355px;letter-spacing:0.40px"><c>tribes that the political future of the peninsula might</c></div>
<div class="ln" style="top:889.2px;left:378px;width:355px;letter-spacing:0.55px"><c>be redesigned without much Seljuk input.</c> Compet-</div>
<div class="ln" style="top:907.3px;left:378px;width:355px;letter-spacing:0.55px">itive principalities emerged under the leadership of</div>
<div class="ln" style="top:925.4px;left:378px;width:355px;letter-spacing:0.10px"><i>beg</i>s (modern Turkish <i>bey</i>, chieftain or lord) from both</div>
<div class="ln" style="top:943.5px;left:378px;width:355px;letter-spacing:0.30px">Seljuk elite and Turcoman backgrounds and included</div>
<div class="ln last" style="top:961.6px;left:378px;width:355px;letter-spacing:0.55px">one under a certain Osman Beg.</div>
<div class="ln" style="top:979.7px;left:395px;width:338px;letter-spacing:0.55px">In considering the vicissitudes of Seljuk rule, <y>it</y></div>
<div class="ln" style="top:997.8px;left:378px;width:355px;letter-spacing:0.43px"><y>is important to note that the heartlands of the Seljuk</y></div>
<div class="ln" style="top:219.5px;left:751px;width:355px;letter-spacing:0.55px">ally considered to be the Ottoman core lands. It is</div>
<div class="ln" style="top:237.6px;left:751px;width:355px;letter-spacing:0.54px">also worth applying some caution in using the term</div>
<div class="ln" style="top:255.7px;left:751px;width:355px;letter-spacing:0.53px"><y>“Turkish Anatolia,” because not all Anatolian Mus-</y></div>
<div class="ln" style="top:273.8px;left:751px;width:355px;letter-spacing:0.29px"><y>lims, rulers or subjects, were necessarily Turkish in a</y></div>
<div class="ln" style="top:291.9px;left:751px;width:355px;letter-spacing:0.07px"><y>strict ethnic sense.</y> Admittedly, <c>terms like “Turco-Mus-</c></div>
<div class="ln" style="top:310.0px;left:751px;width:355px;letter-spacing:-0.03px"><c>lim Anatolia” or “Turkish-speaking Muslims” are inele-</c></div>
<div class="ln" style="top:328.1px;left:751px;width:355px;letter-spacing:0.24px"><c>gant when compared to “Seljuk Anatolia” or “Turks,”</c></div>
<div class="ln" style="top:346.2px;left:751px;width:355px;letter-spacing:0.55px"><c>but historical accuracy sometimes does not warrant</c></div>
<div class="ln" style="top:364.3px;left:751px;width:355px;letter-spacing:0.14px"><c>such shortcuts.</c> At any rate, these qualifications should</div>
<div class="ln" style="top:382.4px;left:751px;width:355px;letter-spacing:0.32px">not in any way detract from the profound association</div>
<div class="ln" style="top:400.5px;left:751px;width:355px;letter-spacing:0.32px">that emerged over time between the historical setting</div>
<div class="ln" style="top:418.6px;left:751px;width:355px;letter-spacing:0.34px">and the Turkish identity scrutinized here. <y>As early as</y></div>
<div class="ln" style="top:436.7px;left:751px;width:355px;letter-spacing:0.46px"><y>the late twelfth century, the word “Turchia”</y> appears</div>
<div class="ln" style="top:454.8px;left:751px;width:355px;letter-spacing:0.35px">on a Latin map as a caption on Asia Minor, a harbin-</div>
<div class="ln" style="top:472.9px;left:751px;width:355px;letter-spacing:0.34px">ger of future European-language usages such as “Ot-</div>
<div class="ln" style="top:491.0px;left:751px;width:355px;letter-spacing:0.35px">toman Turkey” or “European and Asiatic Turkey” all</div>
<div class="ln" style="top:509.1px;left:751px;width:355px;letter-spacing:0.23px">the way into the early twentieth century. A similar us-</div>
<div class="ln" style="top:527.2px;left:751px;width:355px;letter-spacing:0.39px">age can be located in Arabic sources, as in the travel</div>
<div class="ln" style="top:545.3px;left:751px;width:355px;letter-spacing:0.55px">book of <y>Ibn Battuta</y>, whose <y>account of Anatolia in</y></div>
<div class="ln" style="top:563.4px;left:751px;width:355px;letter-spacing:0.10px"><y>the 1330s introduces the region as <i>barr al-Turkiyya al-</i></y></div>
<div class="ln" style="top:581.5px;left:751px;width:355px;letter-spacing:0.09px"><y><i>maʿrūf bi-bilād al-Rūm</i> (the Turkish land known as the</y></div>
<div class="ln" style="top:599.6px;left:751px;width:355px;letter-spacing:0.23px"><y>lands of Rum).</y><sup>6</sup> <c>A historicized approach cannot</c>, how-</div>
<div class="ln" style="top:617.7px;left:751px;width:355px;letter-spacing:0.34px">ever, overlook the fact that it is <y>only in the aftermath</y></div>
<div class="ln" style="top:635.8px;left:751px;width:355px;letter-spacing:0.46px"><y>of the First World War that the predominantly Turk-</y></div>
<div class="ln" style="top:653.9px;left:751px;width:355px;letter-spacing:0.25px"><y>ish-speaking Muslims of the peninsula, now adopting</y></div>
<div class="ln" style="top:672.0px;left:751px;width:355px;letter-spacing:0.38px"><y>wholesale the self-designation “Turk,” embraced the</y></div>
<div class="ln last" style="top:690.1px;left:751px;width:355px;letter-spacing:0.55px"><y>word “Türkiye” for their country.</y></div>
<div class="ln" style="top:708.2px;left:768px;width:338px;letter-spacing:0.13px">Based on such considerations, <c>some students of late</c></div>
<div class="ln" style="top:726.3px;left:751px;width:355px;letter-spacing:0.52px"><c>medieval (<i>ṭavāʾif</i>-era) Anatolian and Ottoman stud-</c></div>
<div class="ln" style="top:744.4px;left:751px;width:355px;letter-spacing:0.55px"><c>ies have been trying to move beyond a critique of</c></div>
<div class="ln" style="top:762.5px;left:751px;width:355px;letter-spacing:0.55px"><c>the nationist and statist paradigms and to develop,</c></div>
<div class="ln" style="top:780.6px;left:751px;width:355px;letter-spacing:0.55px"><c>or to forge out of that critique, a more historicized</c></div>
<div class="ln" style="top:798.7px;left:751px;width:355px;letter-spacing:0.24px"><c>perspective on the dizzyingly complex realities of the</c></div>
<div class="ln" style="top:816.8px;left:751px;width:355px;letter-spacing:0.43px"><c>lands that we study, without assuming the fixity and</c></div>
<div class="ln" style="top:834.9px;left:751px;width:355px;letter-spacing:0.18px"><c>transparency of categories like “Turkish” or “Islamic”</c></div>
<div class="ln" style="top:853.0px;left:751px;width:355px;letter-spacing:0.33px"><c>in designating and analyzing cultural processes.</c> <y>This</y></div>
<div class="ln" style="top:871.1px;left:751px;width:355px;letter-spacing:0.55px"><y>approach is driven by a search for a new historical</y></div>
<div class="ln" style="top:889.2px;left:751px;width:355px;letter-spacing:0.55px"><y>geography and cultural history of identity in south-</y></div>
<div class="ln" style="top:907.3px;left:751px;width:355px;letter-spacing:0.41px"><y>western Asia and southeastern Europe (after a point,</y></div>
<div class="ln" style="top:925.4px;left:751px;width:355px;letter-spacing:0.55px"><y>the realm of the Ottoman empire) in the late medi-</y></div>
<div class="ln" style="top:943.5px;left:751px;width:355px;letter-spacing:0.55px"><y>eval and early modern periods: hence the focus on</y></div>
<div class="ln last" style="top:961.6px;left:751px;width:355px;letter-spacing:0.55px"><y>Rum and Rumi.</y><sup>7</sup></div>
<div class="ln" style="top:979.7px;left:768px;width:338px;letter-spacing:0.19px">The word “Rum” or <i>diyār-ı Rūm</i> for defining a cul-</div>
<div class="a" style="left:341px;top:385px;width:27px;height:27px;background:#ffca08;border-radius:2px"></div><svg style="left:341px;top:385px" width="27" height="27" viewBox="0 0 27 27"><path d="M5 6 L22 6 L22 19.6 L15 19.6 L10.5 23.4 L10 19.6 L5 19.6Z" fill="#fff"/><path d="M8 11.5 L18.7 11.5 M8 14.2 L17.5 14.2" stroke="#ffca08" stroke-width="1.4" stroke-linecap="round"/></svg>
<div class="a" style="left:1120px;top:297px;width:27px;height:27px;background:#ffca08;border-radius:2px"></div><svg style="left:1120px;top:297px" width="27" height="27" viewBox="0 0 27 27"><path d="M5 6 L22 6 L22 19.6 L15 19.6 L10.5 23.4 L10 19.6 L5 19.6Z" fill="#fff"/><path d="M8 11.5 L18.7 11.5 M8 14.2 L17.5 14.2" stroke="#ffca08" stroke-width="1.4" stroke-linecap="round"/></svg>
<div class="a" style="left:1111px;top:864px;width:27px;height:27px;background:#ffca08;border-radius:2px"></div><svg style="left:1111px;top:864px" width="27" height="27" viewBox="0 0 27 27"><path d="M5 6 L22 6 L22 19.6 L15 19.6 L10.5 23.4 L10 19.6 L5 19.6Z" fill="#fff"/><path d="M8 11.5 L18.7 11.5 M8 14.2 L17.5 14.2" stroke="#ffca08" stroke-width="1.4" stroke-linecap="round"/></svg>
<div class="a" style="left:1111px;top:987px;width:27px;height:27px;background:#ffca08;border-radius:2px"></div><svg style="left:1111px;top:987px" width="27" height="27" viewBox="0 0 27 27"><path d="M5 6 L22 6 L22 19.6 L15 19.6 L10.5 23.4 L10 19.6 L5 19.6Z" fill="#fff"/><path d="M8 11.5 L18.7 11.5 M8 14.2 L17.5 14.2" stroke="#ffca08" stroke-width="1.4" stroke-linecap="round"/></svg>
<svg style="left:955px;top:279px" width="16" height="15" viewBox="0 0 16 15"><defs><linearGradient id="mg" x1="0" y1="0" x2="1" y2="1"><stop offset="0" stop-color="#fffbe0"/><stop offset="0.5" stop-color="#fff400"/><stop offset="1" stop-color="#f5d800"/></linearGradient></defs><path d="M2.5 1 L13.5 1 Q14.5 1 14.5 2 L14.5 8.5 Q14.5 9.5 13.5 9.5 L8 9.5 L4 13.5 L4.5 9.5 L2.5 9.5 Q1.5 9.5 1.5 8.5 L1.5 2 Q1.5 1 2.5 1Z" fill="url(#mg)" stroke="#d4a600" stroke-width="1"/><path d="M4.5 4 L11.5 4 M4.5 6.3 L10.5 6.3" stroke="#c9a000" stroke-width="0.9"/></svg>
<svg style="left:1034.5px;top:406px" width="16" height="15" viewBox="0 0 16 15"><defs><linearGradient id="mg" x1="0" y1="0" x2="1" y2="1"><stop offset="0" stop-color="#fffbe0"/><stop offset="0.5" stop-color="#fff400"/><stop offset="1" stop-color="#f5d800"/></linearGradient></defs><path d="M2.5 1 L13.5 1 Q14.5 1 14.5 2 L14.5 8.5 Q14.5 9.5 13.5 9.5 L8 9.5 L4 13.5 L4.5 9.5 L2.5 9.5 Q1.5 9.5 1.5 8.5 L1.5 2 Q1.5 1 2.5 1Z" fill="url(#mg)" stroke="#d4a600" stroke-width="1"/><path d="M4.5 4 L11.5 4 M4.5 6.3 L10.5 6.3" stroke="#c9a000" stroke-width="0.9"/></svg>
<svg style="left:961.3px;top:604.2px" width="16" height="15" viewBox="0 0 16 15"><defs><linearGradient id="mg" x1="0" y1="0" x2="1" y2="1"><stop offset="0" stop-color="#fffbe0"/><stop offset="0.5" stop-color="#fff400"/><stop offset="1" stop-color="#f5d800"/></linearGradient></defs><path d="M2.5 1 L13.5 1 Q14.5 1 14.5 2 L14.5 8.5 Q14.5 9.5 13.5 9.5 L8 9.5 L4 13.5 L4.5 9.5 L2.5 9.5 Q1.5 9.5 1.5 8.5 L1.5 2 Q1.5 1 2.5 1Z" fill="url(#mg)" stroke="#d4a600" stroke-width="1"/><path d="M4.5 4 L11.5 4 M4.5 6.3 L10.5 6.3" stroke="#c9a000" stroke-width="0.9"/></svg>
<svg style="left:1075px;top:840.7px" width="16" height="15" viewBox="0 0 16 15"><defs><linearGradient id="mg" x1="0" y1="0" x2="1" y2="1"><stop offset="0" stop-color="#fffbe0"/><stop offset="0.5" stop-color="#fff400"/><stop offset="1" stop-color="#f5d800"/></linearGradient></defs><path d="M2.5 1 L13.5 1 Q14.5 1 14.5 2 L14.5 8.5 Q14.5 9.5 13.5 9.5 L8 9.5 L4 13.5 L4.5 9.5 L2.5 9.5 Q1.5 9.5 1.5 8.5 L1.5 2 Q1.5 1 2.5 1Z" fill="url(#mg)" stroke="#d4a600" stroke-width="1"/><path d="M4.5 4 L11.5 4 M4.5 6.3 L10.5 6.3" stroke="#c9a000" stroke-width="0.9"/></svg>
<svg style="left:810.4px;top:532.2px" width="16" height="15" viewBox="0 0 16 15"><defs><linearGradient id="mg" x1="0" y1="0" x2="1" y2="1"><stop offset="0" stop-color="#fffbe0"/><stop offset="0.5" stop-color="#fff400"/><stop offset="1" stop-color="#f5d800"/></linearGradient></defs><path d="M2.5 1 L13.5 1 Q14.5 1 14.5 2 L14.5 8.5 Q14.5 9.5 13.5 9.5 L8 9.5 L4 13.5 L4.5 9.5 L2.5 9.5 Q1.5 9.5 1.5 8.5 L1.5 2 Q1.5 1 2.5 1Z" fill="url(#mg)" stroke="#d4a600" stroke-width="1"/><path d="M4.5 4 L11.5 4 M4.5 6.3 L10.5 6.3" stroke="#c9a000" stroke-width="0.9"/></svg>
<svg style="left:0;top:0" width="1752" height="1000"><path d="M954 288.8 L1108 288.8 Q1110.5 288.8 1110.5 291.5 L1110.5 365 Q1110.5 367.5 1108 367.5 L854 367.5 L854 383 Q854 385.5 851.5 385.5 L747.5 385.5 Q745 385.5 745 383 L745 310 Q745 307.5 747.5 307.5 L951 307.5 L951 291.5 Q951 288.8 954 288.8Z" fill="none" stroke="#1f70cf" stroke-width="3"/></svg>
<div class="a" style="left:253px;top:945px;width:1024px;height:55px;background:linear-gradient(rgba(0,0,0,0),rgba(0,0,0,0.065))"></div>
<div class="a" style="left:1277px;top:183px;width:20px;height:817px;background:#454545;border-left:1px solid #3a3a3a;border-right:1px solid #3a3a3a"></div>
<div class="a" style="left:1279px;top:185px;width:16px;height:7px;background:#7b7b7b"></div>
<div class="a" style="left:1282px;top:287px;width:11px;height:22px;border-radius:5px;background:#7b7b7b"></div>
<div class="a" style="left:1297px;top:183px;width:22px;height:817px;background:#414141"></div>
<svg style="left:1301px;top:585px" width="10" height="14" viewBox="0 0 10 14"><path d="M1 0 L1 14 L9 7Z" fill="#c0c0c0"/></svg>
<div class="a" style="left:1319px;top:183px;width:1px;height:817px;background:#353535"></div>
<div class="a" style="left:1320px;top:183px;width:377px;height:817px;background:#4a4a4a"></div>
<div class="a" style="left:1335px;top:206px;font-size:16.1px;font-weight:bold;color:#dcdcdc">71 comments</div>
<svg style="left:1542px;top:199px" width="28" height="28" viewBox="0 0 28 28"><circle cx="11" cy="11" r="8.5" stroke="#cacaca" fill="none" stroke-width="2.2" stroke-linecap="round" stroke-linejoin="round" stroke-width="2.3"/><path d="M17 17 L25 25" stroke="#cacaca" fill="none" stroke-width="2.2" stroke-linecap="round" stroke-linejoin="round" stroke-width="2.5"/></svg>
<div class="a" style="left:1589px;top:198px;font-size:12.5px;line-height:12px;color:#c8c8c8;text-align:center;width:12px">A<br>Z</div>
<svg style="left:1622px;top:200px" width="24" height="26" viewBox="0 0 24 26"><path d="M1 2 L23 2 L14 13 L14 24 L10 21 L10 13Z" fill="#c8c8c8"/></svg>
<svg style="left:1660px;top:208px" width="26" height="10" viewBox="0 0 26 10"><circle cx="3.5" cy="5" r="2.6" fill="#c8c8c8"/><circle cx="12.5" cy="5" r="2.6" fill="#c8c8c8"/><circle cx="21.5" cy="5" r="2.6" fill="#c8c8c8"/></svg>
<div class="a" style="left:1325px;top:242px;width:372px;height:1.5px;background:#5a5a5a"></div>
<div class="a" style="left:1679px;top:244px;width:18px;height:756px;background:#4e4e4e;border-left:1px solid #555"></div>
<div class="a" style="left:1684px;top:602px;width:9px;height:57px;border-radius:5px;background:#7d7d7d"></div>
<div class="a cm" style="left:1343px;top:245px;white-space:nowrap">adipiscing elit, sed do eiusmod tempor<br>incididunt ut labore et dolore magna<br>aliqua. Facilisi nullam vehicula ipsum a.<br>Elit duis tristique sollicitudin nibh sit amet<br>commodo. Eget dolor morbi non arcu<br>risus quis varius quam quisque. Lacus<br>laoreet non curabitur gravida arcu ac<br>tortor dignissim. Ultricies lacus sed turpis<br>tincidunt id aliquet.</div>
<div class="a" style="left:1327px;top:462px;width:344px;height:356px;background:#575757;border:1px solid #8c8c8c;border-radius:4px"></div>
<div class="a" style="left:1343px;top:474px;width:30px;height:30px;border-radius:50%;background:#696969"></div>
<svg style="left:1349px;top:480px" width="18" height="18" viewBox="0 0 18 18"><path d="M13 1.5 L17 5.5 L9 13.5 L5 13.5 L5 9.5Z" fill="#f2f2f2"/><path d="M5 12 L2 16 L8 16" fill="#f2f2f2"/><path d="M9 16.5 L16 16.5" stroke="#f2f2f2" stroke-width="1.3"/></svg>
<div class="a" style="left:1383px;top:479px;font-size:17px;font-weight:bold;color:#efefef">besener</div>
<div class="a" style="left:1460px;top:480px;font-size:14px;color:#cfcfcf">2:09 AM</div>
<svg style="left:1638px;top:485px" width="18" height="6" viewBox="0 0 18 6"><circle cx="2.5" cy="3" r="1.7" fill="#8a8a8a"/><circle cx="9" cy="3" r="1.7" fill="#8a8a8a"/><circle cx="15.5" cy="3" r="1.7" fill="#8a8a8a"/></svg>
<div class="a cm" style="left:1343px;top:517px;white-space:nowrap">Lorem ipsum dolor sit amet, consectetur<br>adipiscing elit, sed do eiusmod tempor<br>incididunt ut labore et dolore magna<br>aliqua. Facilisi nullam vehicula ipsum a.<br>Elit duis tristique sollicitudin nibh sit amet<br>commodo. Eget dolor morbi non arcu<br>risus quis varius quam quisque. Lacus<br>laoreet non curabitur gravida arcu ac<br>tortor dignissim. Ultricies lacus sed turpis<br>tincidunt id aliquet.</div>
<div class="a" style="left:1339px;top:769px;width:320px;height:36px;border-radius:5px;background:#e4e4e4"></div>
<div class="a" style="left:1345px;top:774px;font-size:16.5px;color:#5a5a5a">Add a reply...</div>
<div class="a" style="left:1343px;top:834px;width:30px;height:30px;border-radius:50%;background:#696969"></div>
<svg style="left:1349px;top:840px" width="18" height="18" viewBox="0 0 18 18"><path d="M13 1.5 L17 5.5 L9 13.5 L5 13.5 L5 9.5Z" fill="#f2f2f2"/><path d="M5 12 L2 16 L8 16" fill="#f2f2f2"/><path d="M9 16.5 L16 16.5" stroke="#f2f2f2" stroke-width="1.3"/></svg>
<div class="a" style="left:1383px;top:840px;font-size:17px;font-weight:bold;color:#efefef">besener</div>
<div class="a" style="left:1460px;top:841px;font-size:14px;color:#cfcfcf">Feb 3</div>
<svg style="left:1343px;top:872px" width="28" height="26" viewBox="0 0 28 26"><path d="M20 2 L24 6 L13 17 L8 17 L8 12Z" stroke="#8a8a8a" stroke-width="1.8" fill="none"/><path d="M8 17 L2 23 L10 23" stroke="#8a8a8a" stroke-width="1.8" fill="none"/><rect x="10" y="21" width="16" height="3" fill="#5e5e5e"/></svg>
<div class="a" style="left:1377px;top:876px;font-size:17px;font-style:italic;color:#cfcfcf">Highlighted Text</div>
<div class="a" style="left:1343px;top:925px;width:30px;height:30px;border-radius:50%;background:#696969"></div>
<svg style="left:1349px;top:931px" width="18" height="18" viewBox="0 0 18 18"><path d="M3 3 L15 3 L15 12 L9 12 L6 15 L6 12 L3 12Z" fill="#f2f2f2"/><path d="M5.5 6 L12.5 6 M5.5 9 L12.5 9" stroke="#696969" stroke-width="1.2"/></svg>
<div class="a" style="left:1383px;top:930px;font-size:17px;font-weight:bold;color:#efefef">besener</div>
<div class="a" style="left:1460px;top:931px;font-size:14px;color:#cfcfcf">2:10 AM</div>
<div class="a cm" style="left:1343px;top:969px;white-space:nowrap">Seljuk Anatolia; there was a huge impact<br>by the Rum Seljuks, but they were not</div>
<div class="a" style="left:1697px;top:183px;width:1px;height:817px;background:#3a3a3a"></div>
<div class="a" style="left:1698px;top:183px;width:54px;height:817px;background:#4a4a4a"></div>
<div class="a" style="left:1698px;top:520px;width:54px;height:56px;background:#fcdb4e"></div>
<svg style="left:1712px;top:197px" width="32" height="32" viewBox="0 0 32 32"><path d="M15 28 L3 28 L3 2 L15 2 L22 9 L22 15" stroke="#f37d80" fill="none" stroke-width="2" stroke-linecap="round" stroke-linejoin="round"/><path d="M15 2 L15 9 L22 9" stroke="#f37d80" fill="none" stroke-width="2" stroke-linecap="round" stroke-linejoin="round"/><path d="M8 17 Q11 10 10 6 Q9 4 8.5 7 Q9 12 14 15 Q17 16 16.5 15 Q15 14 10 16" stroke="#f37d80" fill="none" stroke-width="1.2" stroke-linecap="round" stroke-linejoin="round"/><circle cx="23" cy="23" r="7" fill="#f37d80"/><path d="M23 19 L23 27 M19 23 L27 23" stroke="#333" stroke-width="2"/></svg>
<svg style="left:1712px;top:252px" width="32" height="32" viewBox="0 0 32 32"><path d="M11 22 L3 22 L3 3 L13 3" stroke="#9d9cf8" fill="none" stroke-width="2" stroke-linecap="round" stroke-linejoin="round"/><path d="M8 17 Q11 10 10 6 Q9 4 8.5 7 Q9 12 14 15 Q17 16 16.5 15 Q15 14 10 16" stroke="#9d9cf8" fill="none" stroke-width="1.2" stroke-linecap="round" stroke-linejoin="round"/><path d="M15 3 L24 3 L29 8 L29 21 L15 21Z" fill="#9d9cf8"/><path d="M16 14 L16 24 L12 24 L17 30 L22 24 L18 24 L18 14Z" fill="#9d9cf8"/></svg>
<svg style="left:1712px;top:308px" width="32" height="32" viewBox="0 0 32 32"><rect x="3" y="3" width="26" height="10" stroke="#ee77c8" fill="none" stroke-width="2" stroke-linecap="round" stroke-linejoin="round"/><rect x="3" y="18" width="11" height="10" stroke="#ee77c8" fill="none" stroke-width="2" stroke-linecap="round" stroke-linejoin="round"/><path d="M18 19 L29 19 M18 23 L29 23 M18 27 L29 27" stroke="#ee77c8" fill="none" stroke-width="1.6" stroke-linecap="round" stroke-linejoin="round"/></svg>
<svg style="left:1712px;top:364px" width="32" height="32" viewBox="0 0 32 32"><path d="M15 28 L3 28 L3 2 L15 2 L22 9 L22 15" stroke="#45c0d4" fill="none" stroke-width="2" stroke-linecap="round" stroke-linejoin="round"/><path d="M15 2 L15 9 L22 9" stroke="#45c0d4" fill="none" stroke-width="2" stroke-linecap="round" stroke-linejoin="round"/><path d="M8 17 Q11 10 10 6 Q9 4 8.5 7 Q9 12 14 15 Q17 16 16.5 15 Q15 14 10 16" stroke="#45c0d4" fill="none" stroke-width="1.2" stroke-linecap="round" stroke-linejoin="round"/><circle cx="23" cy="23" r="7" fill="#45c0d4"/><path d="M19 23 L26 23 M23 20 L26 23 L23 26" stroke="#333" stroke-width="2" fill="none"/></svg>
<svg style="left:1712px;top:420px" width="32" height="32" viewBox="0 0 32 32"><rect x="18" y="3" width="11" height="25" stroke="#b2e46a" fill="none" stroke-width="2" stroke-linecap="round" stroke-linejoin="round"/><path d="M3 14 L3 28 L14 28 M3 14 L14 14" stroke="#b2e46a" fill="none" stroke-width="2" stroke-linecap="round" stroke-linejoin="round" stroke-dasharray="2.5 2.5"/><path d="M14 3 L5 3 L5 12 M5 3 L13 11" stroke="#b2e46a" fill="none" stroke-width="2" stroke-linecap="round" stroke-linejoin="round"/></svg>
<svg style="left:1712px;top:476px" width="32" height="32" viewBox="0 0 32 32"><path d="M13 28 L3 28 L3 2 L15 2 L22 9 L22 14" stroke="#f8e24a" fill="none" stroke-width="2" stroke-linecap="round" stroke-linejoin="round"/><path d="M15 2 L15 9 L22 9" stroke="#f8e24a" fill="none" stroke-width="2" stroke-linecap="round" stroke-linejoin="round"/><path d="M15 15 L29 15 L29 25 L22 25 L18 29 L18 25 L15 25Z" fill="#f8e24a"/><path d="M18 19 L26 19 M18 22 L26 22" stroke="#444" stroke-width="1.3"/></svg>
<svg style="left:1712px;top:532px" width="32" height="32" viewBox="0 0 32 32"><path d="M3 4 L29 4 L29 22 L17 22 L11 28 L11 22 L3 22Z" stroke="#ffffff" fill="none" stroke-width="2" stroke-linecap="round" stroke-linejoin="round"/><path d="M8 10 L24 10 M8 15 L24 15" stroke="#ffffff" fill="none" stroke-width="2" stroke-linecap="round" stroke-linejoin="round"/></svg>
<svg style="left:1706.5px;top:585.5px" width="38" height="36" viewBox="0 0 38 36"><g transform="rotate(45 18 18)"><path d="M14.5 5 Q14.5 1.5 18 1.5 Q21.5 1.5 21.5 5 L21.5 27 L18 32.5 L14.5 27Z" stroke="#b381f0" stroke-width="2.3" fill="none" stroke-linejoin="round"/></g><path d="M16 28 Q19 22 20.5 26.5 Q21.5 30 24 26 Q25.5 30 27.5 26.5 Q29 29.5 33 28.5" stroke="#b381f0" stroke-width="2.1" fill="none" stroke-linecap="round"/></svg>
<svg style="left:1710px;top:642px" width="34" height="34" viewBox="0 0 34 34"><path d="M10 14 L10 4 L19.5 4 L25 9.5 L25 14" stroke="#6ed36e" stroke-width="2.3" fill="none" stroke-linejoin="round"/><path d="M19 4 L19 10 L25 10" stroke="#6ed36e" stroke-width="2" fill="none"/><rect x="3.5" y="14.5" width="26.5" height="8" rx="2.5" fill="#6ed36e"/><path d="M10 24 L10 32.5 L25 32.5 L25 24" stroke="#6ed36e" stroke-width="2.3" fill="none" stroke-dasharray="2.4 2"/><path d="M29 4 L29 10 M26 7 L32 7" stroke="#6ed36e" stroke-width="1.6"/><circle cx="5" cy="9" r="1.2" fill="#6ed36e"/></svg>
<svg style="left:1712px;top:700px" width="32" height="32" viewBox="0 0 32 32"><path d="M15.5 3 Q10 6 4.5 6 L4.5 16 Q4.5 25 15.5 30 Q26.5 25 26.5 16 L26.5 6 Q21 6 15.5 3Z" stroke="#8f8ff5" fill="none" stroke-width="2.3" stroke-linecap="round" stroke-linejoin="round"/></svg>
<svg style="left:1712px;top:756px" width="32" height="32" viewBox="0 0 32 32"><path d="M5 25 L15 15 Q13 9 17 5 Q21 2 25 4 L21 8 L22 11 L25 12 L29 8 Q30 13 27 16 Q23 19 18 17 L8 28 Q6 30 4 28 Q2 26 5 25Z" fill="#c8c8c8"/><circle cx="23" cy="24" r="7" fill="#c8c8c8" stroke="#4a4a4a" stroke-width="1.5"/><path d="M23 20 L23 28 M19 24 L27 24" stroke="#4a4a4a" stroke-width="2"/></svg>
</body></html>
